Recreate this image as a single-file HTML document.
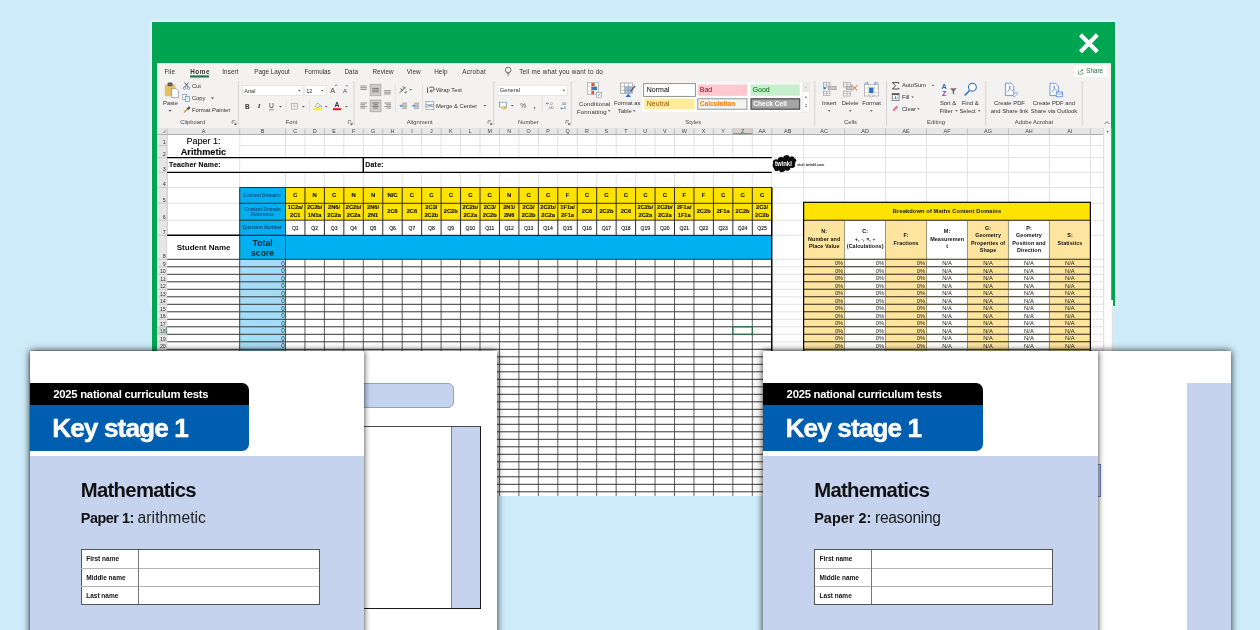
<!DOCTYPE html>
<html lang="en"><head><meta charset="utf-8"><title>KS1 Maths SATs 2025 QLA spreadsheet</title>
<style>
html,body{margin:0;padding:0}
body{width:1260px;height:630px;overflow:hidden;background:#cdebf8;font-family:"Liberation Sans", sans-serif}
#stage{position:relative;width:1260px;height:630px;overflow:hidden;background:#cdebf8}
#stage div,#stage svg{position:absolute;box-sizing:border-box}
#stage .t{white-space:nowrap;line-height:1}
#gs{left:0;top:0;width:1260px;height:630px;will-change:transform}
</style></head><body><div id="stage"><div id="gs">
<div style="left:152px;top:22px;width:962.5px;height:284px;box-shadow:0 0 4px 2px rgba(255,255,255,.45);"></div>
<div style="left:152px;top:22px;width:962.5px;height:284px;background:#00a551;"></div>
<div style="left:152px;top:300px;width:5px;height:196px;background:#00a551;"></div>
<div style="left:157px;top:300px;width:955.8px;height:196px;background:#fff;"></div>
<div style="left:157px;top:63.2px;width:954px;height:432.8px;background:#fff;"></div>
<svg width="1260" height="496" viewBox="0 0 1260 496" style="left:0;top:0" fill="none"><rect x="157" y="127.6" width="946.7" height="6.9" fill="#e6e6e6"/><rect x="157" y="134.5" width="10.2" height="361.5" fill="#e6e6e6"/><rect x="732.85" y="127.6" width="19.45" height="6.9" fill="#d2d2d2"/><path d="M732.85 134.1L752.3 134.1" stroke="#217346" stroke-width="1.2"/><rect x="157" y="326.8" width="10.2" height="7.5" fill="#d2d2d2"/><path d="M166.8 326.8L166.8 334.3" stroke="#217346" stroke-width="1.2"/><path d="M239.7 128.6L239.7 134.5" stroke="#b5b5b5" stroke-width="0.8"/><path d="M239.7 134.5L239.7 496" stroke="#e0e0e0" stroke-width="0.9"/><path d="M285.5 128.6L285.5 134.5" stroke="#b5b5b5" stroke-width="0.8"/><path d="M285.5 134.5L285.5 496" stroke="#e0e0e0" stroke-width="0.9"/><path d="M304.95 128.6L304.95 134.5" stroke="#b5b5b5" stroke-width="0.8"/><path d="M304.95 134.5L304.95 496" stroke="#e0e0e0" stroke-width="0.9"/><path d="M324.4 128.6L324.4 134.5" stroke="#b5b5b5" stroke-width="0.8"/><path d="M324.4 134.5L324.4 496" stroke="#e0e0e0" stroke-width="0.9"/><path d="M343.85 128.6L343.85 134.5" stroke="#b5b5b5" stroke-width="0.8"/><path d="M343.85 134.5L343.85 496" stroke="#e0e0e0" stroke-width="0.9"/><path d="M363.3 128.6L363.3 134.5" stroke="#b5b5b5" stroke-width="0.8"/><path d="M363.3 134.5L363.3 496" stroke="#e0e0e0" stroke-width="0.9"/><path d="M382.75 128.6L382.75 134.5" stroke="#b5b5b5" stroke-width="0.8"/><path d="M382.75 134.5L382.75 496" stroke="#e0e0e0" stroke-width="0.9"/><path d="M402.2 128.6L402.2 134.5" stroke="#b5b5b5" stroke-width="0.8"/><path d="M402.2 134.5L402.2 496" stroke="#e0e0e0" stroke-width="0.9"/><path d="M421.65 128.6L421.65 134.5" stroke="#b5b5b5" stroke-width="0.8"/><path d="M421.65 134.5L421.65 496" stroke="#e0e0e0" stroke-width="0.9"/><path d="M441.1 128.6L441.1 134.5" stroke="#b5b5b5" stroke-width="0.8"/><path d="M441.1 134.5L441.1 496" stroke="#e0e0e0" stroke-width="0.9"/><path d="M460.55 128.6L460.55 134.5" stroke="#b5b5b5" stroke-width="0.8"/><path d="M460.55 134.5L460.55 496" stroke="#e0e0e0" stroke-width="0.9"/><path d="M480 128.6L480 134.5" stroke="#b5b5b5" stroke-width="0.8"/><path d="M480 134.5L480 496" stroke="#e0e0e0" stroke-width="0.9"/><path d="M499.45 128.6L499.45 134.5" stroke="#b5b5b5" stroke-width="0.8"/><path d="M499.45 134.5L499.45 496" stroke="#e0e0e0" stroke-width="0.9"/><path d="M518.9 128.6L518.9 134.5" stroke="#b5b5b5" stroke-width="0.8"/><path d="M518.9 134.5L518.9 496" stroke="#e0e0e0" stroke-width="0.9"/><path d="M538.35 128.6L538.35 134.5" stroke="#b5b5b5" stroke-width="0.8"/><path d="M538.35 134.5L538.35 496" stroke="#e0e0e0" stroke-width="0.9"/><path d="M557.8 128.6L557.8 134.5" stroke="#b5b5b5" stroke-width="0.8"/><path d="M557.8 134.5L557.8 496" stroke="#e0e0e0" stroke-width="0.9"/><path d="M577.25 128.6L577.25 134.5" stroke="#b5b5b5" stroke-width="0.8"/><path d="M577.25 134.5L577.25 496" stroke="#e0e0e0" stroke-width="0.9"/><path d="M596.7 128.6L596.7 134.5" stroke="#b5b5b5" stroke-width="0.8"/><path d="M596.7 134.5L596.7 496" stroke="#e0e0e0" stroke-width="0.9"/><path d="M616.15 128.6L616.15 134.5" stroke="#b5b5b5" stroke-width="0.8"/><path d="M616.15 134.5L616.15 496" stroke="#e0e0e0" stroke-width="0.9"/><path d="M635.6 128.6L635.6 134.5" stroke="#b5b5b5" stroke-width="0.8"/><path d="M635.6 134.5L635.6 496" stroke="#e0e0e0" stroke-width="0.9"/><path d="M655.05 128.6L655.05 134.5" stroke="#b5b5b5" stroke-width="0.8"/><path d="M655.05 134.5L655.05 496" stroke="#e0e0e0" stroke-width="0.9"/><path d="M674.5 128.6L674.5 134.5" stroke="#b5b5b5" stroke-width="0.8"/><path d="M674.5 134.5L674.5 496" stroke="#e0e0e0" stroke-width="0.9"/><path d="M693.95 128.6L693.95 134.5" stroke="#b5b5b5" stroke-width="0.8"/><path d="M693.95 134.5L693.95 496" stroke="#e0e0e0" stroke-width="0.9"/><path d="M713.4 128.6L713.4 134.5" stroke="#b5b5b5" stroke-width="0.8"/><path d="M713.4 134.5L713.4 496" stroke="#e0e0e0" stroke-width="0.9"/><path d="M732.85 128.6L732.85 134.5" stroke="#b5b5b5" stroke-width="0.8"/><path d="M732.85 134.5L732.85 496" stroke="#e0e0e0" stroke-width="0.9"/><path d="M752.3 128.6L752.3 134.5" stroke="#b5b5b5" stroke-width="0.8"/><path d="M752.3 134.5L752.3 496" stroke="#e0e0e0" stroke-width="0.9"/><path d="M771.75 128.6L771.75 134.5" stroke="#b5b5b5" stroke-width="0.8"/><path d="M771.75 134.5L771.75 496" stroke="#e0e0e0" stroke-width="0.9"/><path d="M803.6 128.6L803.6 134.5" stroke="#b5b5b5" stroke-width="0.8"/><path d="M803.6 134.5L803.6 496" stroke="#e0e0e0" stroke-width="0.9"/><path d="M844.57 128.6L844.57 134.5" stroke="#b5b5b5" stroke-width="0.8"/><path d="M844.57 134.5L844.57 496" stroke="#e0e0e0" stroke-width="0.9"/><path d="M885.54 128.6L885.54 134.5" stroke="#b5b5b5" stroke-width="0.8"/><path d="M885.54 134.5L885.54 496" stroke="#e0e0e0" stroke-width="0.9"/><path d="M926.51 128.6L926.51 134.5" stroke="#b5b5b5" stroke-width="0.8"/><path d="M926.51 134.5L926.51 496" stroke="#e0e0e0" stroke-width="0.9"/><path d="M967.48 128.6L967.48 134.5" stroke="#b5b5b5" stroke-width="0.8"/><path d="M967.48 134.5L967.48 496" stroke="#e0e0e0" stroke-width="0.9"/><path d="M1008.45 128.6L1008.45 134.5" stroke="#b5b5b5" stroke-width="0.8"/><path d="M1008.45 134.5L1008.45 496" stroke="#e0e0e0" stroke-width="0.9"/><path d="M1049.42 128.6L1049.42 134.5" stroke="#b5b5b5" stroke-width="0.8"/><path d="M1049.42 134.5L1049.42 496" stroke="#e0e0e0" stroke-width="0.9"/><path d="M1090.39 128.6L1090.39 134.5" stroke="#b5b5b5" stroke-width="0.8"/><path d="M1090.39 134.5L1090.39 496" stroke="#e0e0e0" stroke-width="0.9"/><path d="M167.2 128.6L167.2 496" stroke="#b5b5b5" stroke-width="0.8"/><path d="M167.2 145.6L1103.7 145.6" stroke="#e0e0e0" stroke-width="0.9"/><path d="M157 145.6L167.2 145.6" stroke="#bdbdbd" stroke-width="0.7"/><path d="M167.2 157.6L1103.7 157.6" stroke="#e0e0e0" stroke-width="0.9"/><path d="M157 157.6L167.2 157.6" stroke="#bdbdbd" stroke-width="0.7"/><path d="M167.2 172.3L1103.7 172.3" stroke="#e0e0e0" stroke-width="0.9"/><path d="M157 172.3L167.2 172.3" stroke="#bdbdbd" stroke-width="0.7"/><path d="M167.2 187.5L1103.7 187.5" stroke="#e0e0e0" stroke-width="0.9"/><path d="M157 187.5L167.2 187.5" stroke="#bdbdbd" stroke-width="0.7"/><path d="M167.2 203.3L1103.7 203.3" stroke="#e0e0e0" stroke-width="0.9"/><path d="M157 203.3L167.2 203.3" stroke="#bdbdbd" stroke-width="0.7"/><path d="M167.2 220.2L1103.7 220.2" stroke="#e0e0e0" stroke-width="0.9"/><path d="M157 220.2L167.2 220.2" stroke="#bdbdbd" stroke-width="0.7"/><path d="M167.2 235.3L1103.7 235.3" stroke="#e0e0e0" stroke-width="0.9"/><path d="M157 235.3L167.2 235.3" stroke="#bdbdbd" stroke-width="0.7"/><path d="M167.2 259.3L1103.7 259.3" stroke="#e0e0e0" stroke-width="0.9"/><path d="M157 259.3L167.2 259.3" stroke="#bdbdbd" stroke-width="0.7"/><path d="M167.2 266.8L1103.7 266.8" stroke="#e0e0e0" stroke-width="0.9"/><path d="M157 266.8L167.2 266.8" stroke="#bdbdbd" stroke-width="0.7"/><path d="M167.2 274.3L1103.7 274.3" stroke="#e0e0e0" stroke-width="0.9"/><path d="M157 274.3L167.2 274.3" stroke="#bdbdbd" stroke-width="0.7"/><path d="M167.2 281.8L1103.7 281.8" stroke="#e0e0e0" stroke-width="0.9"/><path d="M157 281.8L167.2 281.8" stroke="#bdbdbd" stroke-width="0.7"/><path d="M167.2 289.3L1103.7 289.3" stroke="#e0e0e0" stroke-width="0.9"/><path d="M157 289.3L167.2 289.3" stroke="#bdbdbd" stroke-width="0.7"/><path d="M167.2 296.8L1103.7 296.8" stroke="#e0e0e0" stroke-width="0.9"/><path d="M157 296.8L167.2 296.8" stroke="#bdbdbd" stroke-width="0.7"/><path d="M167.2 304.3L1103.7 304.3" stroke="#e0e0e0" stroke-width="0.9"/><path d="M157 304.3L167.2 304.3" stroke="#bdbdbd" stroke-width="0.7"/><path d="M167.2 311.8L1103.7 311.8" stroke="#e0e0e0" stroke-width="0.9"/><path d="M157 311.8L167.2 311.8" stroke="#bdbdbd" stroke-width="0.7"/><path d="M167.2 319.3L1103.7 319.3" stroke="#e0e0e0" stroke-width="0.9"/><path d="M157 319.3L167.2 319.3" stroke="#bdbdbd" stroke-width="0.7"/><path d="M167.2 326.8L1103.7 326.8" stroke="#e0e0e0" stroke-width="0.9"/><path d="M157 326.8L167.2 326.8" stroke="#bdbdbd" stroke-width="0.7"/><path d="M167.2 334.3L1103.7 334.3" stroke="#e0e0e0" stroke-width="0.9"/><path d="M157 334.3L167.2 334.3" stroke="#bdbdbd" stroke-width="0.7"/><path d="M167.2 341.8L1103.7 341.8" stroke="#e0e0e0" stroke-width="0.9"/><path d="M157 341.8L167.2 341.8" stroke="#bdbdbd" stroke-width="0.7"/><path d="M167.2 349.3L1103.7 349.3" stroke="#e0e0e0" stroke-width="0.9"/><path d="M157 349.3L167.2 349.3" stroke="#bdbdbd" stroke-width="0.7"/><path d="M167.2 356.8L1103.7 356.8" stroke="#e0e0e0" stroke-width="0.9"/><path d="M157 356.8L167.2 356.8" stroke="#bdbdbd" stroke-width="0.7"/><path d="M167.2 364.3L1103.7 364.3" stroke="#e0e0e0" stroke-width="0.9"/><path d="M157 364.3L167.2 364.3" stroke="#bdbdbd" stroke-width="0.7"/><path d="M167.2 371.8L1103.7 371.8" stroke="#e0e0e0" stroke-width="0.9"/><path d="M157 371.8L167.2 371.8" stroke="#bdbdbd" stroke-width="0.7"/><path d="M167.2 379.3L1103.7 379.3" stroke="#e0e0e0" stroke-width="0.9"/><path d="M157 379.3L167.2 379.3" stroke="#bdbdbd" stroke-width="0.7"/><path d="M167.2 386.8L1103.7 386.8" stroke="#e0e0e0" stroke-width="0.9"/><path d="M157 386.8L167.2 386.8" stroke="#bdbdbd" stroke-width="0.7"/><path d="M167.2 394.3L1103.7 394.3" stroke="#e0e0e0" stroke-width="0.9"/><path d="M157 394.3L167.2 394.3" stroke="#bdbdbd" stroke-width="0.7"/><path d="M167.2 401.8L1103.7 401.8" stroke="#e0e0e0" stroke-width="0.9"/><path d="M157 401.8L167.2 401.8" stroke="#bdbdbd" stroke-width="0.7"/><path d="M167.2 409.3L1103.7 409.3" stroke="#e0e0e0" stroke-width="0.9"/><path d="M157 409.3L167.2 409.3" stroke="#bdbdbd" stroke-width="0.7"/><path d="M167.2 416.8L1103.7 416.8" stroke="#e0e0e0" stroke-width="0.9"/><path d="M157 416.8L167.2 416.8" stroke="#bdbdbd" stroke-width="0.7"/><path d="M167.2 424.3L1103.7 424.3" stroke="#e0e0e0" stroke-width="0.9"/><path d="M157 424.3L167.2 424.3" stroke="#bdbdbd" stroke-width="0.7"/><path d="M167.2 431.8L1103.7 431.8" stroke="#e0e0e0" stroke-width="0.9"/><path d="M157 431.8L167.2 431.8" stroke="#bdbdbd" stroke-width="0.7"/><path d="M167.2 439.3L1103.7 439.3" stroke="#e0e0e0" stroke-width="0.9"/><path d="M157 439.3L167.2 439.3" stroke="#bdbdbd" stroke-width="0.7"/><path d="M167.2 446.8L1103.7 446.8" stroke="#e0e0e0" stroke-width="0.9"/><path d="M157 446.8L167.2 446.8" stroke="#bdbdbd" stroke-width="0.7"/><path d="M167.2 454.3L1103.7 454.3" stroke="#e0e0e0" stroke-width="0.9"/><path d="M157 454.3L167.2 454.3" stroke="#bdbdbd" stroke-width="0.7"/><path d="M167.2 461.8L1103.7 461.8" stroke="#e0e0e0" stroke-width="0.9"/><path d="M157 461.8L167.2 461.8" stroke="#bdbdbd" stroke-width="0.7"/><path d="M167.2 469.3L1103.7 469.3" stroke="#e0e0e0" stroke-width="0.9"/><path d="M157 469.3L167.2 469.3" stroke="#bdbdbd" stroke-width="0.7"/><path d="M167.2 476.8L1103.7 476.8" stroke="#e0e0e0" stroke-width="0.9"/><path d="M157 476.8L167.2 476.8" stroke="#bdbdbd" stroke-width="0.7"/><path d="M167.2 484.3L1103.7 484.3" stroke="#e0e0e0" stroke-width="0.9"/><path d="M157 484.3L167.2 484.3" stroke="#bdbdbd" stroke-width="0.7"/><path d="M167.2 491.8L1103.7 491.8" stroke="#e0e0e0" stroke-width="0.9"/><path d="M157 491.8L167.2 491.8" stroke="#bdbdbd" stroke-width="0.7"/><path d="M157 134.5L1103.7 134.5" stroke="#a8a8a8" stroke-width="0.9"/><path d="M157 127.6L1111 127.6" stroke="#cfcfcf" stroke-width="0.9"/><rect x="167.8" y="135.1" width="71.4" height="21.9" fill="#fff"/><rect x="167.8" y="157.6" width="603.95" height="14.7" fill="#fff"/><path d="M239.7 157.6L239.7 172.3" stroke="#e0e0e0" stroke-width="0.9"/><rect x="239.7" y="187.5" width="45.8" height="47.8" fill="#00b0f0"/><rect x="285.5" y="187.5" width="486.25" height="32.7" fill="#ffe300"/><rect x="285.5" y="220.2" width="486.25" height="15.1" fill="#fff"/><rect x="239.7" y="235.3" width="532.05" height="24" fill="#00b0f0"/><rect x="167.2" y="235.3" width="72.5" height="24" fill="#fff"/><rect x="239.7" y="259.3" width="45.8" height="236.7" fill="#a5ddf8"/><rect x="167.2" y="259.3" width="72.5" height="236.7" fill="#fff"/><rect x="285.5" y="259.3" width="486.25" height="236.7" fill="#fff"/><rect x="803.6" y="202.3" width="286.79" height="17.9" fill="#ffe300"/><rect x="803.6" y="220.2" width="40.97" height="275.8" fill="#fee59f"/><rect x="844.57" y="220.2" width="40.97" height="275.8" fill="#fff"/><rect x="885.54" y="220.2" width="40.97" height="275.8" fill="#fee59f"/><rect x="926.51" y="220.2" width="40.97" height="275.8" fill="#fff"/><rect x="967.48" y="220.2" width="40.97" height="275.8" fill="#fee59f"/><rect x="1008.45" y="220.2" width="40.97" height="275.8" fill="#fff"/><rect x="1049.42" y="220.2" width="40.97" height="275.8" fill="#fee59f"/><path d="M239.7 187.5L771.75 187.5" stroke="#303030" stroke-width="1"/><path d="M239.7 203.3L771.75 203.3" stroke="#303030" stroke-width="1"/><path d="M239.7 220.2L771.75 220.2" stroke="#303030" stroke-width="1"/><path d="M285.5 187.5L285.5 235.3" stroke="#303030" stroke-width="1"/><path d="M304.95 187.5L304.95 235.3" stroke="#303030" stroke-width="1"/><path d="M324.4 187.5L324.4 235.3" stroke="#303030" stroke-width="1"/><path d="M343.85 187.5L343.85 235.3" stroke="#303030" stroke-width="1"/><path d="M363.3 187.5L363.3 235.3" stroke="#303030" stroke-width="1"/><path d="M382.75 187.5L382.75 235.3" stroke="#303030" stroke-width="1"/><path d="M402.2 187.5L402.2 235.3" stroke="#303030" stroke-width="1"/><path d="M421.65 187.5L421.65 235.3" stroke="#303030" stroke-width="1"/><path d="M441.1 187.5L441.1 235.3" stroke="#303030" stroke-width="1"/><path d="M460.55 187.5L460.55 235.3" stroke="#303030" stroke-width="1"/><path d="M480 187.5L480 235.3" stroke="#303030" stroke-width="1"/><path d="M499.45 187.5L499.45 235.3" stroke="#303030" stroke-width="1"/><path d="M518.9 187.5L518.9 235.3" stroke="#303030" stroke-width="1"/><path d="M538.35 187.5L538.35 235.3" stroke="#303030" stroke-width="1"/><path d="M557.8 187.5L557.8 235.3" stroke="#303030" stroke-width="1"/><path d="M577.25 187.5L577.25 235.3" stroke="#303030" stroke-width="1"/><path d="M596.7 187.5L596.7 235.3" stroke="#303030" stroke-width="1"/><path d="M616.15 187.5L616.15 235.3" stroke="#303030" stroke-width="1"/><path d="M635.6 187.5L635.6 235.3" stroke="#303030" stroke-width="1"/><path d="M655.05 187.5L655.05 235.3" stroke="#303030" stroke-width="1"/><path d="M674.5 187.5L674.5 235.3" stroke="#303030" stroke-width="1"/><path d="M693.95 187.5L693.95 235.3" stroke="#303030" stroke-width="1"/><path d="M713.4 187.5L713.4 235.3" stroke="#303030" stroke-width="1"/><path d="M732.85 187.5L732.85 235.3" stroke="#303030" stroke-width="1"/><path d="M752.3 187.5L752.3 235.3" stroke="#303030" stroke-width="1"/><path d="M771.75 187.5L771.75 235.3" stroke="#303030" stroke-width="1"/><path d="M239.7 187.5L239.7 259.3" stroke="#303030" stroke-width="1"/><path d="M167.2 157.6L771.75 157.6" stroke="#000" stroke-width="1.3"/><path d="M167.2 172.3L771.75 172.3" stroke="#000" stroke-width="1.3"/><path d="M363.3 157.6L363.3 172.3" stroke="#000" stroke-width="1.4"/><path d="M167.2 235.3L239.7 235.3" stroke="#000" stroke-width="1.5"/><path d="M239.7 235.3L771.75 235.3" stroke="#111" stroke-width="1"/><path d="M285.5 235.3L285.5 259.3" stroke="#0a4a66" stroke-width="1"/><path d="M167.2 259.3L771.75 259.3" stroke="#303030" stroke-width="0.98"/><path d="M167.2 266.8L771.75 266.8" stroke="#303030" stroke-width="0.98"/><path d="M167.2 274.3L771.75 274.3" stroke="#303030" stroke-width="0.98"/><path d="M167.2 281.8L771.75 281.8" stroke="#303030" stroke-width="0.98"/><path d="M167.2 289.3L771.75 289.3" stroke="#303030" stroke-width="0.98"/><path d="M167.2 296.8L771.75 296.8" stroke="#303030" stroke-width="0.98"/><path d="M167.2 304.3L771.75 304.3" stroke="#303030" stroke-width="0.98"/><path d="M167.2 311.8L771.75 311.8" stroke="#303030" stroke-width="0.98"/><path d="M167.2 319.3L771.75 319.3" stroke="#303030" stroke-width="0.98"/><path d="M167.2 326.8L771.75 326.8" stroke="#303030" stroke-width="0.98"/><path d="M167.2 334.3L771.75 334.3" stroke="#303030" stroke-width="0.98"/><path d="M167.2 341.8L771.75 341.8" stroke="#303030" stroke-width="0.98"/><path d="M167.2 349.3L771.75 349.3" stroke="#303030" stroke-width="0.98"/><path d="M167.2 356.8L771.75 356.8" stroke="#303030" stroke-width="0.98"/><path d="M167.2 364.3L771.75 364.3" stroke="#303030" stroke-width="0.98"/><path d="M167.2 371.8L771.75 371.8" stroke="#303030" stroke-width="0.98"/><path d="M167.2 379.3L771.75 379.3" stroke="#303030" stroke-width="0.98"/><path d="M167.2 386.8L771.75 386.8" stroke="#303030" stroke-width="0.98"/><path d="M167.2 394.3L771.75 394.3" stroke="#303030" stroke-width="0.98"/><path d="M167.2 401.8L771.75 401.8" stroke="#303030" stroke-width="0.98"/><path d="M167.2 409.3L771.75 409.3" stroke="#303030" stroke-width="0.98"/><path d="M167.2 416.8L771.75 416.8" stroke="#303030" stroke-width="0.98"/><path d="M167.2 424.3L771.75 424.3" stroke="#303030" stroke-width="0.98"/><path d="M167.2 431.8L771.75 431.8" stroke="#303030" stroke-width="0.98"/><path d="M167.2 439.3L771.75 439.3" stroke="#303030" stroke-width="0.98"/><path d="M167.2 446.8L771.75 446.8" stroke="#303030" stroke-width="0.98"/><path d="M167.2 454.3L771.75 454.3" stroke="#303030" stroke-width="0.98"/><path d="M167.2 461.8L771.75 461.8" stroke="#303030" stroke-width="0.98"/><path d="M167.2 469.3L771.75 469.3" stroke="#303030" stroke-width="0.98"/><path d="M167.2 476.8L771.75 476.8" stroke="#303030" stroke-width="0.98"/><path d="M167.2 484.3L771.75 484.3" stroke="#303030" stroke-width="0.98"/><path d="M167.2 491.8L771.75 491.8" stroke="#303030" stroke-width="0.98"/><path d="M285.5 259.3L285.5 496" stroke="#303030" stroke-width="0.78"/><path d="M304.95 259.3L304.95 496" stroke="#303030" stroke-width="0.78"/><path d="M324.4 259.3L324.4 496" stroke="#303030" stroke-width="0.78"/><path d="M343.85 259.3L343.85 496" stroke="#303030" stroke-width="0.78"/><path d="M363.3 259.3L363.3 496" stroke="#303030" stroke-width="0.78"/><path d="M382.75 259.3L382.75 496" stroke="#303030" stroke-width="0.78"/><path d="M402.2 259.3L402.2 496" stroke="#303030" stroke-width="0.78"/><path d="M421.65 259.3L421.65 496" stroke="#303030" stroke-width="0.78"/><path d="M441.1 259.3L441.1 496" stroke="#303030" stroke-width="0.78"/><path d="M460.55 259.3L460.55 496" stroke="#303030" stroke-width="0.78"/><path d="M480 259.3L480 496" stroke="#303030" stroke-width="0.78"/><path d="M499.45 259.3L499.45 496" stroke="#303030" stroke-width="0.78"/><path d="M518.9 259.3L518.9 496" stroke="#303030" stroke-width="0.78"/><path d="M538.35 259.3L538.35 496" stroke="#303030" stroke-width="0.78"/><path d="M557.8 259.3L557.8 496" stroke="#303030" stroke-width="0.78"/><path d="M577.25 259.3L577.25 496" stroke="#303030" stroke-width="0.78"/><path d="M596.7 259.3L596.7 496" stroke="#303030" stroke-width="0.78"/><path d="M616.15 259.3L616.15 496" stroke="#303030" stroke-width="0.78"/><path d="M635.6 259.3L635.6 496" stroke="#303030" stroke-width="0.78"/><path d="M655.05 259.3L655.05 496" stroke="#303030" stroke-width="0.78"/><path d="M674.5 259.3L674.5 496" stroke="#303030" stroke-width="0.78"/><path d="M693.95 259.3L693.95 496" stroke="#303030" stroke-width="0.78"/><path d="M713.4 259.3L713.4 496" stroke="#303030" stroke-width="0.78"/><path d="M732.85 259.3L732.85 496" stroke="#303030" stroke-width="0.78"/><path d="M752.3 259.3L752.3 496" stroke="#303030" stroke-width="0.78"/><path d="M771.75 259.3L771.75 496" stroke="#303030" stroke-width="0.78"/><path d="M239.7 259.3L239.7 496" stroke="#303030" stroke-width="0.9"/><path d="M771.75 187.5L771.75 496" stroke="#000" stroke-width="1.3"/><path d="M803.6 259.3L1090.39 259.3" stroke="#2a2410" stroke-width="1.1"/><path d="M803.6 266.8L1090.39 266.8" stroke="#2a2410" stroke-width="1.1"/><path d="M803.6 274.3L1090.39 274.3" stroke="#2a2410" stroke-width="1.1"/><path d="M803.6 281.8L1090.39 281.8" stroke="#2a2410" stroke-width="1.1"/><path d="M803.6 289.3L1090.39 289.3" stroke="#2a2410" stroke-width="1.1"/><path d="M803.6 296.8L1090.39 296.8" stroke="#2a2410" stroke-width="1.1"/><path d="M803.6 304.3L1090.39 304.3" stroke="#2a2410" stroke-width="1.1"/><path d="M803.6 311.8L1090.39 311.8" stroke="#2a2410" stroke-width="1.1"/><path d="M803.6 319.3L1090.39 319.3" stroke="#2a2410" stroke-width="1.1"/><path d="M803.6 326.8L1090.39 326.8" stroke="#2a2410" stroke-width="1.1"/><path d="M803.6 334.3L1090.39 334.3" stroke="#2a2410" stroke-width="1.1"/><path d="M803.6 341.8L1090.39 341.8" stroke="#2a2410" stroke-width="1.1"/><path d="M803.6 349.3L1090.39 349.3" stroke="#2a2410" stroke-width="1.1"/><path d="M803.6 356.8L1090.39 356.8" stroke="#2a2410" stroke-width="1.1"/><path d="M803.6 364.3L1090.39 364.3" stroke="#2a2410" stroke-width="1.1"/><path d="M803.6 371.8L1090.39 371.8" stroke="#2a2410" stroke-width="1.1"/><path d="M803.6 379.3L1090.39 379.3" stroke="#2a2410" stroke-width="1.1"/><path d="M803.6 386.8L1090.39 386.8" stroke="#2a2410" stroke-width="1.1"/><path d="M803.6 394.3L1090.39 394.3" stroke="#2a2410" stroke-width="1.1"/><path d="M803.6 401.8L1090.39 401.8" stroke="#2a2410" stroke-width="1.1"/><path d="M803.6 409.3L1090.39 409.3" stroke="#2a2410" stroke-width="1.1"/><path d="M803.6 416.8L1090.39 416.8" stroke="#2a2410" stroke-width="1.1"/><path d="M803.6 424.3L1090.39 424.3" stroke="#2a2410" stroke-width="1.1"/><path d="M803.6 431.8L1090.39 431.8" stroke="#2a2410" stroke-width="1.1"/><path d="M803.6 439.3L1090.39 439.3" stroke="#2a2410" stroke-width="1.1"/><path d="M803.6 446.8L1090.39 446.8" stroke="#2a2410" stroke-width="1.1"/><path d="M803.6 454.3L1090.39 454.3" stroke="#2a2410" stroke-width="1.1"/><path d="M803.6 461.8L1090.39 461.8" stroke="#2a2410" stroke-width="1.1"/><path d="M803.6 469.3L1090.39 469.3" stroke="#2a2410" stroke-width="1.1"/><path d="M803.6 476.8L1090.39 476.8" stroke="#2a2410" stroke-width="1.1"/><path d="M803.6 484.3L1090.39 484.3" stroke="#2a2410" stroke-width="1.1"/><path d="M803.6 491.8L1090.39 491.8" stroke="#2a2410" stroke-width="1.1"/><path d="M803.6 220.2L1090.39 220.2" stroke="#1f1c0c" stroke-width="1.1"/><path d="M844.57 220.2L844.57 496" stroke="#5e5838" stroke-width="0.6"/><path d="M885.54 220.2L885.54 496" stroke="#5e5838" stroke-width="0.6"/><path d="M926.51 220.2L926.51 496" stroke="#5e5838" stroke-width="0.6"/><path d="M967.48 220.2L967.48 496" stroke="#5e5838" stroke-width="0.6"/><path d="M1008.45 220.2L1008.45 496" stroke="#5e5838" stroke-width="0.6"/><path d="M1049.42 220.2L1049.42 496" stroke="#5e5838" stroke-width="0.6"/><rect x="803.6" y="202.3" width="286.79" height="297.7" fill="none" stroke="#000" stroke-width="1.2"/><rect x="732.85" y="326.8" width="19.45" height="7.5" fill="none" stroke="#217346" stroke-width="1.1"/><rect x="751.3" y="333.3" width="2" height="2" fill="#217346"/><path d="M165.5 129.5V133H162Z" fill="#b0b0b0"/><g fill="#0d0d0d" transform="rotate(-10 784 163.8)"><ellipse cx="784" cy="163.9" rx="11.6" ry="5.6"/><circle cx="776.6" cy="161.2" r="3.3"/><circle cx="781.6" cy="159.6" r="3.2"/><circle cx="787.4" cy="159.0" r="3.4"/><circle cx="792.4" cy="160.8" r="3.0"/><circle cx="776.4" cy="166.6" r="3.2"/><circle cx="781.2" cy="168.4" r="3.3"/><circle cx="786.6" cy="168.2" r="3.0"/><circle cx="791.8" cy="166.4" r="3.0"/></g><circle cx="794.3" cy="160.3" r="1.9" fill="#0d0d0d"/><rect x="1103.7" y="127.6" width="7.5" height="368.4" fill="#fff"/><path d="M1103.7 127.6L1103.7 496" stroke="#cfcfcf" stroke-width="0.8"/><path d="M1112.3 306L1112.3 496" stroke="#d0d0d0" stroke-width="0.8"/><rect x="1104.1" y="128.1" width="6.9" height="7.4" fill="#f4f4f4"/><circle cx="1107.6" cy="131.6" r="0.9" fill="#666"/></svg>
<div class="t" style="top:128.63px;font-size:5.4px;color:#444;left:203.45px;transform:translateX(-50%);">A</div>
<div class="t" style="top:128.63px;font-size:5.4px;color:#444;left:262.6px;transform:translateX(-50%);">B</div>
<div class="t" style="top:128.63px;font-size:5.4px;color:#444;left:295.23px;transform:translateX(-50%);">C</div>
<div class="t" style="top:128.63px;font-size:5.4px;color:#444;left:314.67px;transform:translateX(-50%);">D</div>
<div class="t" style="top:128.63px;font-size:5.4px;color:#444;left:334.12px;transform:translateX(-50%);">E</div>
<div class="t" style="top:128.63px;font-size:5.4px;color:#444;left:353.58px;transform:translateX(-50%);">F</div>
<div class="t" style="top:128.63px;font-size:5.4px;color:#444;left:373.02px;transform:translateX(-50%);">G</div>
<div class="t" style="top:128.63px;font-size:5.4px;color:#444;left:392.48px;transform:translateX(-50%);">H</div>
<div class="t" style="top:128.63px;font-size:5.4px;color:#444;left:411.92px;transform:translateX(-50%);">I</div>
<div class="t" style="top:128.63px;font-size:5.4px;color:#444;left:431.38px;transform:translateX(-50%);">J</div>
<div class="t" style="top:128.63px;font-size:5.4px;color:#444;left:450.82px;transform:translateX(-50%);">K</div>
<div class="t" style="top:128.63px;font-size:5.4px;color:#444;left:470.27px;transform:translateX(-50%);">L</div>
<div class="t" style="top:128.63px;font-size:5.4px;color:#444;left:489.73px;transform:translateX(-50%);">M</div>
<div class="t" style="top:128.63px;font-size:5.4px;color:#444;left:509.17px;transform:translateX(-50%);">N</div>
<div class="t" style="top:128.63px;font-size:5.4px;color:#444;left:528.62px;transform:translateX(-50%);">O</div>
<div class="t" style="top:128.63px;font-size:5.4px;color:#444;left:548.08px;transform:translateX(-50%);">P</div>
<div class="t" style="top:128.63px;font-size:5.4px;color:#444;left:567.52px;transform:translateX(-50%);">Q</div>
<div class="t" style="top:128.63px;font-size:5.4px;color:#444;left:586.98px;transform:translateX(-50%);">R</div>
<div class="t" style="top:128.63px;font-size:5.4px;color:#444;left:606.42px;transform:translateX(-50%);">S</div>
<div class="t" style="top:128.63px;font-size:5.4px;color:#444;left:625.88px;transform:translateX(-50%);">T</div>
<div class="t" style="top:128.63px;font-size:5.4px;color:#444;left:645.32px;transform:translateX(-50%);">U</div>
<div class="t" style="top:128.63px;font-size:5.4px;color:#444;left:664.77px;transform:translateX(-50%);">V</div>
<div class="t" style="top:128.63px;font-size:5.4px;color:#444;left:684.23px;transform:translateX(-50%);">W</div>
<div class="t" style="top:128.63px;font-size:5.4px;color:#444;left:703.67px;transform:translateX(-50%);">X</div>
<div class="t" style="top:128.63px;font-size:5.4px;color:#444;left:723.12px;transform:translateX(-50%);">Y</div>
<div class="t" style="top:128.63px;font-size:5.4px;color:#217346;left:742.57px;transform:translateX(-50%);">Z</div>
<div class="t" style="top:128.63px;font-size:5.4px;color:#444;left:762.02px;transform:translateX(-50%);">AA</div>
<div class="t" style="top:128.63px;font-size:5.4px;color:#444;left:787.67px;transform:translateX(-50%);">AB</div>
<div class="t" style="top:128.63px;font-size:5.4px;color:#444;left:824.09px;transform:translateX(-50%);">AC</div>
<div class="t" style="top:128.63px;font-size:5.4px;color:#444;left:865.06px;transform:translateX(-50%);">AD</div>
<div class="t" style="top:128.63px;font-size:5.4px;color:#444;left:906.02px;transform:translateX(-50%);">AE</div>
<div class="t" style="top:128.63px;font-size:5.4px;color:#444;left:947px;transform:translateX(-50%);">AF</div>
<div class="t" style="top:128.63px;font-size:5.4px;color:#444;left:987.97px;transform:translateX(-50%);">AG</div>
<div class="t" style="top:128.63px;font-size:5.4px;color:#444;left:1028.93px;transform:translateX(-50%);">AH</div>
<div class="t" style="top:128.63px;font-size:5.4px;color:#444;left:1069.9px;transform:translateX(-50%);">AI</div>
<div class="t" style="top:140.41px;font-size:5.3px;color:#303030;left:165.8px;transform:translateX(-100%);">1</div>
<div class="t" style="top:152.41px;font-size:5.3px;color:#303030;left:165.8px;transform:translateX(-100%);">2</div>
<div class="t" style="top:167.11px;font-size:5.3px;color:#303030;left:165.8px;transform:translateX(-100%);">3</div>
<div class="t" style="top:182.31px;font-size:5.3px;color:#303030;left:165.8px;transform:translateX(-100%);">4</div>
<div class="t" style="top:198.11px;font-size:5.3px;color:#303030;left:165.8px;transform:translateX(-100%);">5</div>
<div class="t" style="top:215.01px;font-size:5.3px;color:#303030;left:165.8px;transform:translateX(-100%);">6</div>
<div class="t" style="top:230.11px;font-size:5.3px;color:#303030;left:165.8px;transform:translateX(-100%);">7</div>
<div class="t" style="top:254.11px;font-size:5.3px;color:#303030;left:165.8px;transform:translateX(-100%);">8</div>
<div class="t" style="top:261.61px;font-size:5.3px;color:#303030;left:165.8px;transform:translateX(-100%);">9</div>
<div class="t" style="top:269.11px;font-size:5.3px;color:#303030;left:165.8px;transform:translateX(-100%);">10</div>
<div class="t" style="top:276.61px;font-size:5.3px;color:#303030;left:165.8px;transform:translateX(-100%);">11</div>
<div class="t" style="top:284.11px;font-size:5.3px;color:#303030;left:165.8px;transform:translateX(-100%);">12</div>
<div class="t" style="top:291.61px;font-size:5.3px;color:#303030;left:165.8px;transform:translateX(-100%);">13</div>
<div class="t" style="top:299.11px;font-size:5.3px;color:#303030;left:165.8px;transform:translateX(-100%);">14</div>
<div class="t" style="top:306.61px;font-size:5.3px;color:#303030;left:165.8px;transform:translateX(-100%);">15</div>
<div class="t" style="top:314.11px;font-size:5.3px;color:#303030;left:165.8px;transform:translateX(-100%);">16</div>
<div class="t" style="top:321.61px;font-size:5.3px;color:#303030;left:165.8px;transform:translateX(-100%);">17</div>
<div class="t" style="top:329.11px;font-size:5.3px;color:#217346;left:165.8px;transform:translateX(-100%);">18</div>
<div class="t" style="top:336.61px;font-size:5.3px;color:#303030;left:165.8px;transform:translateX(-100%);">19</div>
<div class="t" style="top:344.11px;font-size:5.3px;color:#303030;left:165.8px;transform:translateX(-100%);">20</div>
<div class="t" style="top:351.61px;font-size:5.3px;color:#303030;left:165.8px;transform:translateX(-100%);">21</div>
<div class="t" style="top:359.11px;font-size:5.3px;color:#303030;left:165.8px;transform:translateX(-100%);">22</div>
<div class="t" style="top:366.61px;font-size:5.3px;color:#303030;left:165.8px;transform:translateX(-100%);">23</div>
<div class="t" style="top:374.11px;font-size:5.3px;color:#303030;left:165.8px;transform:translateX(-100%);">24</div>
<div class="t" style="top:381.61px;font-size:5.3px;color:#303030;left:165.8px;transform:translateX(-100%);">25</div>
<div class="t" style="top:389.11px;font-size:5.3px;color:#303030;left:165.8px;transform:translateX(-100%);">26</div>
<div class="t" style="top:396.61px;font-size:5.3px;color:#303030;left:165.8px;transform:translateX(-100%);">27</div>
<div class="t" style="top:404.11px;font-size:5.3px;color:#303030;left:165.8px;transform:translateX(-100%);">28</div>
<div class="t" style="top:411.61px;font-size:5.3px;color:#303030;left:165.8px;transform:translateX(-100%);">29</div>
<div class="t" style="top:419.11px;font-size:5.3px;color:#303030;left:165.8px;transform:translateX(-100%);">30</div>
<div class="t" style="top:426.61px;font-size:5.3px;color:#303030;left:165.8px;transform:translateX(-100%);">31</div>
<div class="t" style="top:434.11px;font-size:5.3px;color:#303030;left:165.8px;transform:translateX(-100%);">32</div>
<div class="t" style="top:441.61px;font-size:5.3px;color:#303030;left:165.8px;transform:translateX(-100%);">33</div>
<div class="t" style="top:449.11px;font-size:5.3px;color:#303030;left:165.8px;transform:translateX(-100%);">34</div>
<div class="t" style="top:456.61px;font-size:5.3px;color:#303030;left:165.8px;transform:translateX(-100%);">35</div>
<div class="t" style="top:464.11px;font-size:5.3px;color:#303030;left:165.8px;transform:translateX(-100%);">36</div>
<div class="t" style="top:471.61px;font-size:5.3px;color:#303030;left:165.8px;transform:translateX(-100%);">37</div>
<div class="t" style="top:479.11px;font-size:5.3px;color:#303030;left:165.8px;transform:translateX(-100%);">38</div>
<div class="t" style="top:486.61px;font-size:5.3px;color:#303030;left:165.8px;transform:translateX(-100%);">39</div>
<div class="t" style="top:136.88px;font-size:9px;color:#111;left:203.45px;transform:translateX(-50%);-webkit-text-stroke:0.15px #111;">Paper 1:</div>
<div class="t" style="top:147.81px;font-size:9.2px;color:#111;font-weight:700;left:203.45px;transform:translateX(-50%);-webkit-text-stroke:0.15px #111;">Arithmetic</div>
<div class="t" style="top:162.46px;font-size:6.9px;color:#111;font-weight:700;letter-spacing:0.22px;left:169px;-webkit-text-stroke:0.15px #111;">Teacher Name:</div>
<div class="t" style="top:162.46px;font-size:6.9px;color:#111;font-weight:700;letter-spacing:0.25px;left:365.3px;-webkit-text-stroke:0.15px #111;">Date:</div>
<div class="t" style="top:244.03px;font-size:8px;color:#111;font-weight:700;left:203.65px;transform:translateX(-50%);">Student Name</div>
<div class="t" style="top:238.64px;font-size:8.7px;color:#12202c;font-weight:700;left:262.6px;transform:translateX(-50%);">Total</div>
<div class="t" style="top:249.44px;font-size:8.7px;color:#12202c;font-weight:700;left:262.6px;transform:translateX(-50%);">score</div>
<div class="t" style="top:194.02px;font-size:4.7px;color:#0b4f7a;font-weight:700;left:262.2px;transform:translateX(-50%);">Content Domain:</div>
<div class="t" style="top:207.52px;font-size:4.7px;color:#0b4f7a;font-weight:700;left:262.6px;transform:translateX(-50%);">Content  Domain</div>
<div class="t" style="top:213.12px;font-size:4.7px;color:#0b4f7a;font-weight:700;left:262.2px;transform:translateX(-50%);">Reference</div>
<div class="t" style="top:226.32px;font-size:4.7px;color:#0b4f7a;font-weight:700;left:262.2px;transform:translateX(-50%);">Question Number</div>
<div class="t" style="top:192.61px;font-size:5.9px;color:#111;font-weight:700;left:295.23px;transform:translateX(-50%);-webkit-text-stroke:0.12px #111;">C</div>
<div class="t" style="top:205.27px;font-size:5.7px;color:#111;font-weight:700;left:295.23px;transform:translateX(-50%);-webkit-text-stroke:0.12px #111;">1C2a/</div>
<div class="t" style="top:212.67px;font-size:5.7px;color:#111;font-weight:700;left:295.23px;transform:translateX(-50%);-webkit-text-stroke:0.12px #111;">2C1</div>
<div class="t" style="top:226.47px;font-size:5px;color:#111;left:295.23px;transform:translateX(-50%);-webkit-text-stroke:0.12px #111;">Q1</div>
<div class="t" style="top:192.61px;font-size:5.9px;color:#111;font-weight:700;left:314.68px;transform:translateX(-50%);-webkit-text-stroke:0.12px #111;">N</div>
<div class="t" style="top:205.27px;font-size:5.7px;color:#111;font-weight:700;left:314.68px;transform:translateX(-50%);-webkit-text-stroke:0.12px #111;">2C2b/</div>
<div class="t" style="top:212.67px;font-size:5.7px;color:#111;font-weight:700;left:314.68px;transform:translateX(-50%);-webkit-text-stroke:0.12px #111;">1N1a</div>
<div class="t" style="top:226.47px;font-size:5px;color:#111;left:314.68px;transform:translateX(-50%);-webkit-text-stroke:0.12px #111;">Q2</div>
<div class="t" style="top:192.61px;font-size:5.9px;color:#111;font-weight:700;left:334.12px;transform:translateX(-50%);-webkit-text-stroke:0.12px #111;">C</div>
<div class="t" style="top:205.27px;font-size:5.7px;color:#111;font-weight:700;left:334.12px;transform:translateX(-50%);-webkit-text-stroke:0.12px #111;">2N6/</div>
<div class="t" style="top:212.67px;font-size:5.7px;color:#111;font-weight:700;left:334.12px;transform:translateX(-50%);-webkit-text-stroke:0.12px #111;">2C2a</div>
<div class="t" style="top:226.47px;font-size:5px;color:#111;left:334.12px;transform:translateX(-50%);-webkit-text-stroke:0.12px #111;">Q3</div>
<div class="t" style="top:192.61px;font-size:5.9px;color:#111;font-weight:700;left:353.57px;transform:translateX(-50%);-webkit-text-stroke:0.12px #111;">N</div>
<div class="t" style="top:205.27px;font-size:5.7px;color:#111;font-weight:700;left:353.57px;transform:translateX(-50%);-webkit-text-stroke:0.12px #111;">2C2b/</div>
<div class="t" style="top:212.67px;font-size:5.7px;color:#111;font-weight:700;left:353.57px;transform:translateX(-50%);-webkit-text-stroke:0.12px #111;">2C2a</div>
<div class="t" style="top:226.47px;font-size:5px;color:#111;left:353.57px;transform:translateX(-50%);-webkit-text-stroke:0.12px #111;">Q4</div>
<div class="t" style="top:192.61px;font-size:5.9px;color:#111;font-weight:700;left:373.02px;transform:translateX(-50%);-webkit-text-stroke:0.12px #111;">N</div>
<div class="t" style="top:205.27px;font-size:5.7px;color:#111;font-weight:700;left:373.02px;transform:translateX(-50%);-webkit-text-stroke:0.12px #111;">2N6/</div>
<div class="t" style="top:212.67px;font-size:5.7px;color:#111;font-weight:700;left:373.02px;transform:translateX(-50%);-webkit-text-stroke:0.12px #111;">2N1</div>
<div class="t" style="top:226.47px;font-size:5px;color:#111;left:373.02px;transform:translateX(-50%);-webkit-text-stroke:0.12px #111;">Q5</div>
<div class="t" style="top:192.61px;font-size:5.9px;color:#111;font-weight:700;left:392.48px;transform:translateX(-50%);-webkit-text-stroke:0.12px #111;">N/C</div>
<div class="t" style="top:209.07px;font-size:5.7px;color:#111;font-weight:700;left:392.48px;transform:translateX(-50%);-webkit-text-stroke:0.12px #111;">2C6</div>
<div class="t" style="top:226.47px;font-size:5px;color:#111;left:392.48px;transform:translateX(-50%);-webkit-text-stroke:0.12px #111;">Q6</div>
<div class="t" style="top:192.61px;font-size:5.9px;color:#111;font-weight:700;left:411.93px;transform:translateX(-50%);-webkit-text-stroke:0.12px #111;">C</div>
<div class="t" style="top:209.07px;font-size:5.7px;color:#111;font-weight:700;left:411.93px;transform:translateX(-50%);-webkit-text-stroke:0.12px #111;">2C6</div>
<div class="t" style="top:226.47px;font-size:5px;color:#111;left:411.93px;transform:translateX(-50%);-webkit-text-stroke:0.12px #111;">Q7</div>
<div class="t" style="top:192.61px;font-size:5.9px;color:#111;font-weight:700;left:431.38px;transform:translateX(-50%);-webkit-text-stroke:0.12px #111;">C</div>
<div class="t" style="top:205.27px;font-size:5.7px;color:#111;font-weight:700;left:431.38px;transform:translateX(-50%);-webkit-text-stroke:0.12px #111;">2C3/</div>
<div class="t" style="top:212.67px;font-size:5.7px;color:#111;font-weight:700;left:431.38px;transform:translateX(-50%);-webkit-text-stroke:0.12px #111;">2C2b</div>
<div class="t" style="top:226.47px;font-size:5px;color:#111;left:431.38px;transform:translateX(-50%);-webkit-text-stroke:0.12px #111;">Q8</div>
<div class="t" style="top:192.61px;font-size:5.9px;color:#111;font-weight:700;left:450.82px;transform:translateX(-50%);-webkit-text-stroke:0.12px #111;">C</div>
<div class="t" style="top:209.07px;font-size:5.7px;color:#111;font-weight:700;left:450.82px;transform:translateX(-50%);-webkit-text-stroke:0.12px #111;">2C2b</div>
<div class="t" style="top:226.47px;font-size:5px;color:#111;left:450.82px;transform:translateX(-50%);-webkit-text-stroke:0.12px #111;">Q9</div>
<div class="t" style="top:192.61px;font-size:5.9px;color:#111;font-weight:700;left:470.27px;transform:translateX(-50%);-webkit-text-stroke:0.12px #111;">C</div>
<div class="t" style="top:205.27px;font-size:5.7px;color:#111;font-weight:700;left:470.27px;transform:translateX(-50%);-webkit-text-stroke:0.12px #111;">2C2b/</div>
<div class="t" style="top:212.67px;font-size:5.7px;color:#111;font-weight:700;left:470.27px;transform:translateX(-50%);-webkit-text-stroke:0.12px #111;">2C2a</div>
<div class="t" style="top:226.47px;font-size:5px;color:#111;left:470.27px;transform:translateX(-50%);-webkit-text-stroke:0.12px #111;">Q10</div>
<div class="t" style="top:192.61px;font-size:5.9px;color:#111;font-weight:700;left:489.73px;transform:translateX(-50%);-webkit-text-stroke:0.12px #111;">C</div>
<div class="t" style="top:205.27px;font-size:5.7px;color:#111;font-weight:700;left:489.73px;transform:translateX(-50%);-webkit-text-stroke:0.12px #111;">2C3/</div>
<div class="t" style="top:212.67px;font-size:5.7px;color:#111;font-weight:700;left:489.73px;transform:translateX(-50%);-webkit-text-stroke:0.12px #111;">2C2b</div>
<div class="t" style="top:226.47px;font-size:5px;color:#111;left:489.73px;transform:translateX(-50%);-webkit-text-stroke:0.12px #111;">Q11</div>
<div class="t" style="top:192.61px;font-size:5.9px;color:#111;font-weight:700;left:509.17px;transform:translateX(-50%);-webkit-text-stroke:0.12px #111;">N</div>
<div class="t" style="top:205.27px;font-size:5.7px;color:#111;font-weight:700;left:509.17px;transform:translateX(-50%);-webkit-text-stroke:0.12px #111;">2N1/</div>
<div class="t" style="top:212.67px;font-size:5.7px;color:#111;font-weight:700;left:509.17px;transform:translateX(-50%);-webkit-text-stroke:0.12px #111;">2N6</div>
<div class="t" style="top:226.47px;font-size:5px;color:#111;left:509.17px;transform:translateX(-50%);-webkit-text-stroke:0.12px #111;">Q12</div>
<div class="t" style="top:192.61px;font-size:5.9px;color:#111;font-weight:700;left:528.62px;transform:translateX(-50%);-webkit-text-stroke:0.12px #111;">C</div>
<div class="t" style="top:205.27px;font-size:5.7px;color:#111;font-weight:700;left:528.62px;transform:translateX(-50%);-webkit-text-stroke:0.12px #111;">2C3/</div>
<div class="t" style="top:212.67px;font-size:5.7px;color:#111;font-weight:700;left:528.62px;transform:translateX(-50%);-webkit-text-stroke:0.12px #111;">2C2b</div>
<div class="t" style="top:226.47px;font-size:5px;color:#111;left:528.62px;transform:translateX(-50%);-webkit-text-stroke:0.12px #111;">Q13</div>
<div class="t" style="top:192.61px;font-size:5.9px;color:#111;font-weight:700;left:548.08px;transform:translateX(-50%);-webkit-text-stroke:0.12px #111;">C</div>
<div class="t" style="top:205.27px;font-size:5.7px;color:#111;font-weight:700;left:548.08px;transform:translateX(-50%);-webkit-text-stroke:0.12px #111;">2C2b/</div>
<div class="t" style="top:212.67px;font-size:5.7px;color:#111;font-weight:700;left:548.08px;transform:translateX(-50%);-webkit-text-stroke:0.12px #111;">2C2a</div>
<div class="t" style="top:226.47px;font-size:5px;color:#111;left:548.08px;transform:translateX(-50%);-webkit-text-stroke:0.12px #111;">Q14</div>
<div class="t" style="top:192.61px;font-size:5.9px;color:#111;font-weight:700;left:567.52px;transform:translateX(-50%);-webkit-text-stroke:0.12px #111;">F</div>
<div class="t" style="top:205.27px;font-size:5.7px;color:#111;font-weight:700;left:567.52px;transform:translateX(-50%);-webkit-text-stroke:0.12px #111;">1F1a/</div>
<div class="t" style="top:212.67px;font-size:5.7px;color:#111;font-weight:700;left:567.52px;transform:translateX(-50%);-webkit-text-stroke:0.12px #111;">2F1a</div>
<div class="t" style="top:226.47px;font-size:5px;color:#111;left:567.52px;transform:translateX(-50%);-webkit-text-stroke:0.12px #111;">Q15</div>
<div class="t" style="top:192.61px;font-size:5.9px;color:#111;font-weight:700;left:586.97px;transform:translateX(-50%);-webkit-text-stroke:0.12px #111;">C</div>
<div class="t" style="top:209.07px;font-size:5.7px;color:#111;font-weight:700;left:586.97px;transform:translateX(-50%);-webkit-text-stroke:0.12px #111;">2C6</div>
<div class="t" style="top:226.47px;font-size:5px;color:#111;left:586.97px;transform:translateX(-50%);-webkit-text-stroke:0.12px #111;">Q16</div>
<div class="t" style="top:192.61px;font-size:5.9px;color:#111;font-weight:700;left:606.42px;transform:translateX(-50%);-webkit-text-stroke:0.12px #111;">C</div>
<div class="t" style="top:209.07px;font-size:5.7px;color:#111;font-weight:700;left:606.42px;transform:translateX(-50%);-webkit-text-stroke:0.12px #111;">2C2b</div>
<div class="t" style="top:226.47px;font-size:5px;color:#111;left:606.42px;transform:translateX(-50%);-webkit-text-stroke:0.12px #111;">Q17</div>
<div class="t" style="top:192.61px;font-size:5.9px;color:#111;font-weight:700;left:625.88px;transform:translateX(-50%);-webkit-text-stroke:0.12px #111;">C</div>
<div class="t" style="top:209.07px;font-size:5.7px;color:#111;font-weight:700;left:625.88px;transform:translateX(-50%);-webkit-text-stroke:0.12px #111;">2C6</div>
<div class="t" style="top:226.47px;font-size:5px;color:#111;left:625.88px;transform:translateX(-50%);-webkit-text-stroke:0.12px #111;">Q18</div>
<div class="t" style="top:192.61px;font-size:5.9px;color:#111;font-weight:700;left:645.33px;transform:translateX(-50%);-webkit-text-stroke:0.12px #111;">C</div>
<div class="t" style="top:205.27px;font-size:5.7px;color:#111;font-weight:700;left:645.33px;transform:translateX(-50%);-webkit-text-stroke:0.12px #111;">2C2b/</div>
<div class="t" style="top:212.67px;font-size:5.7px;color:#111;font-weight:700;left:645.33px;transform:translateX(-50%);-webkit-text-stroke:0.12px #111;">2C2a</div>
<div class="t" style="top:226.47px;font-size:5px;color:#111;left:645.33px;transform:translateX(-50%);-webkit-text-stroke:0.12px #111;">Q19</div>
<div class="t" style="top:192.61px;font-size:5.9px;color:#111;font-weight:700;left:664.77px;transform:translateX(-50%);-webkit-text-stroke:0.12px #111;">C</div>
<div class="t" style="top:205.27px;font-size:5.7px;color:#111;font-weight:700;left:664.77px;transform:translateX(-50%);-webkit-text-stroke:0.12px #111;">2C2b/</div>
<div class="t" style="top:212.67px;font-size:5.7px;color:#111;font-weight:700;left:664.77px;transform:translateX(-50%);-webkit-text-stroke:0.12px #111;">2C2a</div>
<div class="t" style="top:226.47px;font-size:5px;color:#111;left:664.77px;transform:translateX(-50%);-webkit-text-stroke:0.12px #111;">Q20</div>
<div class="t" style="top:192.61px;font-size:5.9px;color:#111;font-weight:700;left:684.22px;transform:translateX(-50%);-webkit-text-stroke:0.12px #111;">F</div>
<div class="t" style="top:205.27px;font-size:5.7px;color:#111;font-weight:700;left:684.22px;transform:translateX(-50%);-webkit-text-stroke:0.12px #111;">2F1a/</div>
<div class="t" style="top:212.67px;font-size:5.7px;color:#111;font-weight:700;left:684.22px;transform:translateX(-50%);-webkit-text-stroke:0.12px #111;">1F1a</div>
<div class="t" style="top:226.47px;font-size:5px;color:#111;left:684.22px;transform:translateX(-50%);-webkit-text-stroke:0.12px #111;">Q21</div>
<div class="t" style="top:192.61px;font-size:5.9px;color:#111;font-weight:700;left:703.67px;transform:translateX(-50%);-webkit-text-stroke:0.12px #111;">F</div>
<div class="t" style="top:209.07px;font-size:5.7px;color:#111;font-weight:700;left:703.67px;transform:translateX(-50%);-webkit-text-stroke:0.12px #111;">2C2b</div>
<div class="t" style="top:226.47px;font-size:5px;color:#111;left:703.67px;transform:translateX(-50%);-webkit-text-stroke:0.12px #111;">Q22</div>
<div class="t" style="top:192.61px;font-size:5.9px;color:#111;font-weight:700;left:723.12px;transform:translateX(-50%);-webkit-text-stroke:0.12px #111;">C</div>
<div class="t" style="top:209.07px;font-size:5.7px;color:#111;font-weight:700;left:723.12px;transform:translateX(-50%);-webkit-text-stroke:0.12px #111;">2F1a</div>
<div class="t" style="top:226.47px;font-size:5px;color:#111;left:723.12px;transform:translateX(-50%);-webkit-text-stroke:0.12px #111;">Q23</div>
<div class="t" style="top:192.61px;font-size:5.9px;color:#111;font-weight:700;left:742.58px;transform:translateX(-50%);-webkit-text-stroke:0.12px #111;">C</div>
<div class="t" style="top:209.07px;font-size:5.7px;color:#111;font-weight:700;left:742.58px;transform:translateX(-50%);-webkit-text-stroke:0.12px #111;">2C2b</div>
<div class="t" style="top:226.47px;font-size:5px;color:#111;left:742.58px;transform:translateX(-50%);-webkit-text-stroke:0.12px #111;">Q24</div>
<div class="t" style="top:192.61px;font-size:5.9px;color:#111;font-weight:700;left:762.02px;transform:translateX(-50%);-webkit-text-stroke:0.12px #111;">C</div>
<div class="t" style="top:205.27px;font-size:5.7px;color:#111;font-weight:700;left:762.02px;transform:translateX(-50%);-webkit-text-stroke:0.12px #111;">2C3/</div>
<div class="t" style="top:212.67px;font-size:5.7px;color:#111;font-weight:700;left:762.02px;transform:translateX(-50%);-webkit-text-stroke:0.12px #111;">2C2b</div>
<div class="t" style="top:226.47px;font-size:5px;color:#111;left:762.02px;transform:translateX(-50%);-webkit-text-stroke:0.12px #111;">Q25</div>
<div class="t" style="top:260.87px;font-size:6.3px;color:#10283a;left:284.7px;transform:translateX(-100%);">0</div>
<div class="t" style="top:268.37px;font-size:6.3px;color:#10283a;left:284.7px;transform:translateX(-100%);">0</div>
<div class="t" style="top:275.87px;font-size:6.3px;color:#10283a;left:284.7px;transform:translateX(-100%);">0</div>
<div class="t" style="top:283.37px;font-size:6.3px;color:#10283a;left:284.7px;transform:translateX(-100%);">0</div>
<div class="t" style="top:290.87px;font-size:6.3px;color:#10283a;left:284.7px;transform:translateX(-100%);">0</div>
<div class="t" style="top:298.37px;font-size:6.3px;color:#10283a;left:284.7px;transform:translateX(-100%);">0</div>
<div class="t" style="top:305.87px;font-size:6.3px;color:#10283a;left:284.7px;transform:translateX(-100%);">0</div>
<div class="t" style="top:313.37px;font-size:6.3px;color:#10283a;left:284.7px;transform:translateX(-100%);">0</div>
<div class="t" style="top:320.87px;font-size:6.3px;color:#10283a;left:284.7px;transform:translateX(-100%);">0</div>
<div class="t" style="top:328.37px;font-size:6.3px;color:#10283a;left:284.7px;transform:translateX(-100%);">0</div>
<div class="t" style="top:335.87px;font-size:6.3px;color:#10283a;left:284.7px;transform:translateX(-100%);">0</div>
<div class="t" style="top:343.37px;font-size:6.3px;color:#10283a;left:284.7px;transform:translateX(-100%);">0</div>
<div class="t" style="top:350.87px;font-size:6.3px;color:#10283a;left:284.7px;transform:translateX(-100%);">0</div>
<div class="t" style="top:358.37px;font-size:6.3px;color:#10283a;left:284.7px;transform:translateX(-100%);">0</div>
<div class="t" style="top:365.87px;font-size:6.3px;color:#10283a;left:284.7px;transform:translateX(-100%);">0</div>
<div class="t" style="top:373.37px;font-size:6.3px;color:#10283a;left:284.7px;transform:translateX(-100%);">0</div>
<div class="t" style="top:380.87px;font-size:6.3px;color:#10283a;left:284.7px;transform:translateX(-100%);">0</div>
<div class="t" style="top:388.37px;font-size:6.3px;color:#10283a;left:284.7px;transform:translateX(-100%);">0</div>
<div class="t" style="top:395.87px;font-size:6.3px;color:#10283a;left:284.7px;transform:translateX(-100%);">0</div>
<div class="t" style="top:403.37px;font-size:6.3px;color:#10283a;left:284.7px;transform:translateX(-100%);">0</div>
<div class="t" style="top:410.87px;font-size:6.3px;color:#10283a;left:284.7px;transform:translateX(-100%);">0</div>
<div class="t" style="top:418.37px;font-size:6.3px;color:#10283a;left:284.7px;transform:translateX(-100%);">0</div>
<div class="t" style="top:425.87px;font-size:6.3px;color:#10283a;left:284.7px;transform:translateX(-100%);">0</div>
<div class="t" style="top:433.37px;font-size:6.3px;color:#10283a;left:284.7px;transform:translateX(-100%);">0</div>
<div class="t" style="top:440.87px;font-size:6.3px;color:#10283a;left:284.7px;transform:translateX(-100%);">0</div>
<div class="t" style="top:448.37px;font-size:6.3px;color:#10283a;left:284.7px;transform:translateX(-100%);">0</div>
<div class="t" style="top:455.87px;font-size:6.3px;color:#10283a;left:284.7px;transform:translateX(-100%);">0</div>
<div class="t" style="top:463.37px;font-size:6.3px;color:#10283a;left:284.7px;transform:translateX(-100%);">0</div>
<div class="t" style="top:470.87px;font-size:6.3px;color:#10283a;left:284.7px;transform:translateX(-100%);">0</div>
<div class="t" style="top:478.37px;font-size:6.3px;color:#10283a;left:284.7px;transform:translateX(-100%);">0</div>
<div class="t" style="top:485.87px;font-size:6.3px;color:#10283a;left:284.7px;transform:translateX(-100%);">0</div>
<div class="t" style="top:160.17px;font-size:7.6px;color:#fff;font-weight:700;left:774.7px;transform-origin:0 50%;transform:scaleX(.78);">twinkl</div>
<div class="t" style="top:163.88px;font-size:3.45px;color:#222;font-weight:700;letter-spacing:0.09px;left:797.3px;">visit twinkl.com</div>
<div class="t" style="top:209.17px;font-size:5.7px;color:#111;font-weight:700;letter-spacing:0.12px;left:947.06px;transform:translateX(-50%);">Breakdown of Maths Content Domains</div>
<div class="t" style="top:229.44px;font-size:5.45px;color:#111;font-weight:700;letter-spacing:0.06px;left:824.19px;transform:translateX(-50%);">N:</div>
<div class="t" style="top:236.89px;font-size:5.45px;color:#111;font-weight:700;letter-spacing:0.06px;left:824.19px;transform:translateX(-50%);">Number and</div>
<div class="t" style="top:244.34px;font-size:5.45px;color:#111;font-weight:700;letter-spacing:0.06px;left:824.19px;transform:translateX(-50%);">Place Value</div>
<div class="t" style="top:261.09px;font-size:5.8px;color:#222;left:843.27px;transform:translateX(-100%);">0%</div>
<div class="t" style="top:268.59px;font-size:5.8px;color:#222;left:843.27px;transform:translateX(-100%);">0%</div>
<div class="t" style="top:276.09px;font-size:5.8px;color:#222;left:843.27px;transform:translateX(-100%);">0%</div>
<div class="t" style="top:283.59px;font-size:5.8px;color:#222;left:843.27px;transform:translateX(-100%);">0%</div>
<div class="t" style="top:291.09px;font-size:5.8px;color:#222;left:843.27px;transform:translateX(-100%);">0%</div>
<div class="t" style="top:298.59px;font-size:5.8px;color:#222;left:843.27px;transform:translateX(-100%);">0%</div>
<div class="t" style="top:306.09px;font-size:5.8px;color:#222;left:843.27px;transform:translateX(-100%);">0%</div>
<div class="t" style="top:313.59px;font-size:5.8px;color:#222;left:843.27px;transform:translateX(-100%);">0%</div>
<div class="t" style="top:321.09px;font-size:5.8px;color:#222;left:843.27px;transform:translateX(-100%);">0%</div>
<div class="t" style="top:328.59px;font-size:5.8px;color:#222;left:843.27px;transform:translateX(-100%);">0%</div>
<div class="t" style="top:336.09px;font-size:5.8px;color:#222;left:843.27px;transform:translateX(-100%);">0%</div>
<div class="t" style="top:343.59px;font-size:5.8px;color:#222;left:843.27px;transform:translateX(-100%);">0%</div>
<div class="t" style="top:351.09px;font-size:5.8px;color:#222;left:843.27px;transform:translateX(-100%);">0%</div>
<div class="t" style="top:358.59px;font-size:5.8px;color:#222;left:843.27px;transform:translateX(-100%);">0%</div>
<div class="t" style="top:366.09px;font-size:5.8px;color:#222;left:843.27px;transform:translateX(-100%);">0%</div>
<div class="t" style="top:373.59px;font-size:5.8px;color:#222;left:843.27px;transform:translateX(-100%);">0%</div>
<div class="t" style="top:381.09px;font-size:5.8px;color:#222;left:843.27px;transform:translateX(-100%);">0%</div>
<div class="t" style="top:388.59px;font-size:5.8px;color:#222;left:843.27px;transform:translateX(-100%);">0%</div>
<div class="t" style="top:396.09px;font-size:5.8px;color:#222;left:843.27px;transform:translateX(-100%);">0%</div>
<div class="t" style="top:403.59px;font-size:5.8px;color:#222;left:843.27px;transform:translateX(-100%);">0%</div>
<div class="t" style="top:411.09px;font-size:5.8px;color:#222;left:843.27px;transform:translateX(-100%);">0%</div>
<div class="t" style="top:418.59px;font-size:5.8px;color:#222;left:843.27px;transform:translateX(-100%);">0%</div>
<div class="t" style="top:426.09px;font-size:5.8px;color:#222;left:843.27px;transform:translateX(-100%);">0%</div>
<div class="t" style="top:433.59px;font-size:5.8px;color:#222;left:843.27px;transform:translateX(-100%);">0%</div>
<div class="t" style="top:441.09px;font-size:5.8px;color:#222;left:843.27px;transform:translateX(-100%);">0%</div>
<div class="t" style="top:448.59px;font-size:5.8px;color:#222;left:843.27px;transform:translateX(-100%);">0%</div>
<div class="t" style="top:456.09px;font-size:5.8px;color:#222;left:843.27px;transform:translateX(-100%);">0%</div>
<div class="t" style="top:463.59px;font-size:5.8px;color:#222;left:843.27px;transform:translateX(-100%);">0%</div>
<div class="t" style="top:471.09px;font-size:5.8px;color:#222;left:843.27px;transform:translateX(-100%);">0%</div>
<div class="t" style="top:478.59px;font-size:5.8px;color:#222;left:843.27px;transform:translateX(-100%);">0%</div>
<div class="t" style="top:486.09px;font-size:5.8px;color:#222;left:843.27px;transform:translateX(-100%);">0%</div>
<div class="t" style="top:229.44px;font-size:5.45px;color:#111;font-weight:700;letter-spacing:0.06px;left:865.16px;transform:translateX(-50%);">C:</div>
<div class="t" style="top:236.89px;font-size:5.45px;color:#111;font-weight:700;letter-spacing:0.06px;left:865.16px;transform:translateX(-50%);">+, -, ×, ÷</div>
<div class="t" style="top:244.34px;font-size:5.45px;color:#111;font-weight:700;letter-spacing:0.06px;left:865.16px;transform:translateX(-50%);">(Calculations)</div>
<div class="t" style="top:261.09px;font-size:5.8px;color:#222;left:884.24px;transform:translateX(-100%);">0%</div>
<div class="t" style="top:268.59px;font-size:5.8px;color:#222;left:884.24px;transform:translateX(-100%);">0%</div>
<div class="t" style="top:276.09px;font-size:5.8px;color:#222;left:884.24px;transform:translateX(-100%);">0%</div>
<div class="t" style="top:283.59px;font-size:5.8px;color:#222;left:884.24px;transform:translateX(-100%);">0%</div>
<div class="t" style="top:291.09px;font-size:5.8px;color:#222;left:884.24px;transform:translateX(-100%);">0%</div>
<div class="t" style="top:298.59px;font-size:5.8px;color:#222;left:884.24px;transform:translateX(-100%);">0%</div>
<div class="t" style="top:306.09px;font-size:5.8px;color:#222;left:884.24px;transform:translateX(-100%);">0%</div>
<div class="t" style="top:313.59px;font-size:5.8px;color:#222;left:884.24px;transform:translateX(-100%);">0%</div>
<div class="t" style="top:321.09px;font-size:5.8px;color:#222;left:884.24px;transform:translateX(-100%);">0%</div>
<div class="t" style="top:328.59px;font-size:5.8px;color:#222;left:884.24px;transform:translateX(-100%);">0%</div>
<div class="t" style="top:336.09px;font-size:5.8px;color:#222;left:884.24px;transform:translateX(-100%);">0%</div>
<div class="t" style="top:343.59px;font-size:5.8px;color:#222;left:884.24px;transform:translateX(-100%);">0%</div>
<div class="t" style="top:351.09px;font-size:5.8px;color:#222;left:884.24px;transform:translateX(-100%);">0%</div>
<div class="t" style="top:358.59px;font-size:5.8px;color:#222;left:884.24px;transform:translateX(-100%);">0%</div>
<div class="t" style="top:366.09px;font-size:5.8px;color:#222;left:884.24px;transform:translateX(-100%);">0%</div>
<div class="t" style="top:373.59px;font-size:5.8px;color:#222;left:884.24px;transform:translateX(-100%);">0%</div>
<div class="t" style="top:381.09px;font-size:5.8px;color:#222;left:884.24px;transform:translateX(-100%);">0%</div>
<div class="t" style="top:388.59px;font-size:5.8px;color:#222;left:884.24px;transform:translateX(-100%);">0%</div>
<div class="t" style="top:396.09px;font-size:5.8px;color:#222;left:884.24px;transform:translateX(-100%);">0%</div>
<div class="t" style="top:403.59px;font-size:5.8px;color:#222;left:884.24px;transform:translateX(-100%);">0%</div>
<div class="t" style="top:411.09px;font-size:5.8px;color:#222;left:884.24px;transform:translateX(-100%);">0%</div>
<div class="t" style="top:418.59px;font-size:5.8px;color:#222;left:884.24px;transform:translateX(-100%);">0%</div>
<div class="t" style="top:426.09px;font-size:5.8px;color:#222;left:884.24px;transform:translateX(-100%);">0%</div>
<div class="t" style="top:433.59px;font-size:5.8px;color:#222;left:884.24px;transform:translateX(-100%);">0%</div>
<div class="t" style="top:441.09px;font-size:5.8px;color:#222;left:884.24px;transform:translateX(-100%);">0%</div>
<div class="t" style="top:448.59px;font-size:5.8px;color:#222;left:884.24px;transform:translateX(-100%);">0%</div>
<div class="t" style="top:456.09px;font-size:5.8px;color:#222;left:884.24px;transform:translateX(-100%);">0%</div>
<div class="t" style="top:463.59px;font-size:5.8px;color:#222;left:884.24px;transform:translateX(-100%);">0%</div>
<div class="t" style="top:471.09px;font-size:5.8px;color:#222;left:884.24px;transform:translateX(-100%);">0%</div>
<div class="t" style="top:478.59px;font-size:5.8px;color:#222;left:884.24px;transform:translateX(-100%);">0%</div>
<div class="t" style="top:486.09px;font-size:5.8px;color:#222;left:884.24px;transform:translateX(-100%);">0%</div>
<div class="t" style="top:233.16px;font-size:5.45px;color:#111;font-weight:700;letter-spacing:0.06px;left:906.12px;transform:translateX(-50%);">F:</div>
<div class="t" style="top:240.61px;font-size:5.45px;color:#111;font-weight:700;letter-spacing:0.06px;left:906.12px;transform:translateX(-50%);">Fractions</div>
<div class="t" style="top:261.09px;font-size:5.8px;color:#222;left:925.21px;transform:translateX(-100%);">0%</div>
<div class="t" style="top:268.59px;font-size:5.8px;color:#222;left:925.21px;transform:translateX(-100%);">0%</div>
<div class="t" style="top:276.09px;font-size:5.8px;color:#222;left:925.21px;transform:translateX(-100%);">0%</div>
<div class="t" style="top:283.59px;font-size:5.8px;color:#222;left:925.21px;transform:translateX(-100%);">0%</div>
<div class="t" style="top:291.09px;font-size:5.8px;color:#222;left:925.21px;transform:translateX(-100%);">0%</div>
<div class="t" style="top:298.59px;font-size:5.8px;color:#222;left:925.21px;transform:translateX(-100%);">0%</div>
<div class="t" style="top:306.09px;font-size:5.8px;color:#222;left:925.21px;transform:translateX(-100%);">0%</div>
<div class="t" style="top:313.59px;font-size:5.8px;color:#222;left:925.21px;transform:translateX(-100%);">0%</div>
<div class="t" style="top:321.09px;font-size:5.8px;color:#222;left:925.21px;transform:translateX(-100%);">0%</div>
<div class="t" style="top:328.59px;font-size:5.8px;color:#222;left:925.21px;transform:translateX(-100%);">0%</div>
<div class="t" style="top:336.09px;font-size:5.8px;color:#222;left:925.21px;transform:translateX(-100%);">0%</div>
<div class="t" style="top:343.59px;font-size:5.8px;color:#222;left:925.21px;transform:translateX(-100%);">0%</div>
<div class="t" style="top:351.09px;font-size:5.8px;color:#222;left:925.21px;transform:translateX(-100%);">0%</div>
<div class="t" style="top:358.59px;font-size:5.8px;color:#222;left:925.21px;transform:translateX(-100%);">0%</div>
<div class="t" style="top:366.09px;font-size:5.8px;color:#222;left:925.21px;transform:translateX(-100%);">0%</div>
<div class="t" style="top:373.59px;font-size:5.8px;color:#222;left:925.21px;transform:translateX(-100%);">0%</div>
<div class="t" style="top:381.09px;font-size:5.8px;color:#222;left:925.21px;transform:translateX(-100%);">0%</div>
<div class="t" style="top:388.59px;font-size:5.8px;color:#222;left:925.21px;transform:translateX(-100%);">0%</div>
<div class="t" style="top:396.09px;font-size:5.8px;color:#222;left:925.21px;transform:translateX(-100%);">0%</div>
<div class="t" style="top:403.59px;font-size:5.8px;color:#222;left:925.21px;transform:translateX(-100%);">0%</div>
<div class="t" style="top:411.09px;font-size:5.8px;color:#222;left:925.21px;transform:translateX(-100%);">0%</div>
<div class="t" style="top:418.59px;font-size:5.8px;color:#222;left:925.21px;transform:translateX(-100%);">0%</div>
<div class="t" style="top:426.09px;font-size:5.8px;color:#222;left:925.21px;transform:translateX(-100%);">0%</div>
<div class="t" style="top:433.59px;font-size:5.8px;color:#222;left:925.21px;transform:translateX(-100%);">0%</div>
<div class="t" style="top:441.09px;font-size:5.8px;color:#222;left:925.21px;transform:translateX(-100%);">0%</div>
<div class="t" style="top:448.59px;font-size:5.8px;color:#222;left:925.21px;transform:translateX(-100%);">0%</div>
<div class="t" style="top:456.09px;font-size:5.8px;color:#222;left:925.21px;transform:translateX(-100%);">0%</div>
<div class="t" style="top:463.59px;font-size:5.8px;color:#222;left:925.21px;transform:translateX(-100%);">0%</div>
<div class="t" style="top:471.09px;font-size:5.8px;color:#222;left:925.21px;transform:translateX(-100%);">0%</div>
<div class="t" style="top:478.59px;font-size:5.8px;color:#222;left:925.21px;transform:translateX(-100%);">0%</div>
<div class="t" style="top:486.09px;font-size:5.8px;color:#222;left:925.21px;transform:translateX(-100%);">0%</div>
<div class="t" style="top:229.44px;font-size:5.45px;color:#111;font-weight:700;letter-spacing:0.06px;left:947.1px;transform:translateX(-50%);">M:</div>
<div class="t" style="top:236.89px;font-size:5.45px;color:#111;font-weight:700;letter-spacing:0.06px;left:947.1px;transform:translateX(-50%);">Measuremen</div>
<div class="t" style="top:244.34px;font-size:5.45px;color:#111;font-weight:700;letter-spacing:0.06px;left:947.1px;transform:translateX(-50%);">t</div>
<div class="t" style="top:261.09px;font-size:5.8px;color:#222;left:947px;transform:translateX(-50%);">N/A</div>
<div class="t" style="top:268.59px;font-size:5.8px;color:#222;left:947px;transform:translateX(-50%);">N/A</div>
<div class="t" style="top:276.09px;font-size:5.8px;color:#222;left:947px;transform:translateX(-50%);">N/A</div>
<div class="t" style="top:283.59px;font-size:5.8px;color:#222;left:947px;transform:translateX(-50%);">N/A</div>
<div class="t" style="top:291.09px;font-size:5.8px;color:#222;left:947px;transform:translateX(-50%);">N/A</div>
<div class="t" style="top:298.59px;font-size:5.8px;color:#222;left:947px;transform:translateX(-50%);">N/A</div>
<div class="t" style="top:306.09px;font-size:5.8px;color:#222;left:947px;transform:translateX(-50%);">N/A</div>
<div class="t" style="top:313.59px;font-size:5.8px;color:#222;left:947px;transform:translateX(-50%);">N/A</div>
<div class="t" style="top:321.09px;font-size:5.8px;color:#222;left:947px;transform:translateX(-50%);">N/A</div>
<div class="t" style="top:328.59px;font-size:5.8px;color:#222;left:947px;transform:translateX(-50%);">N/A</div>
<div class="t" style="top:336.09px;font-size:5.8px;color:#222;left:947px;transform:translateX(-50%);">N/A</div>
<div class="t" style="top:343.59px;font-size:5.8px;color:#222;left:947px;transform:translateX(-50%);">N/A</div>
<div class="t" style="top:351.09px;font-size:5.8px;color:#222;left:947px;transform:translateX(-50%);">N/A</div>
<div class="t" style="top:358.59px;font-size:5.8px;color:#222;left:947px;transform:translateX(-50%);">N/A</div>
<div class="t" style="top:366.09px;font-size:5.8px;color:#222;left:947px;transform:translateX(-50%);">N/A</div>
<div class="t" style="top:373.59px;font-size:5.8px;color:#222;left:947px;transform:translateX(-50%);">N/A</div>
<div class="t" style="top:381.09px;font-size:5.8px;color:#222;left:947px;transform:translateX(-50%);">N/A</div>
<div class="t" style="top:388.59px;font-size:5.8px;color:#222;left:947px;transform:translateX(-50%);">N/A</div>
<div class="t" style="top:396.09px;font-size:5.8px;color:#222;left:947px;transform:translateX(-50%);">N/A</div>
<div class="t" style="top:403.59px;font-size:5.8px;color:#222;left:947px;transform:translateX(-50%);">N/A</div>
<div class="t" style="top:411.09px;font-size:5.8px;color:#222;left:947px;transform:translateX(-50%);">N/A</div>
<div class="t" style="top:418.59px;font-size:5.8px;color:#222;left:947px;transform:translateX(-50%);">N/A</div>
<div class="t" style="top:426.09px;font-size:5.8px;color:#222;left:947px;transform:translateX(-50%);">N/A</div>
<div class="t" style="top:433.59px;font-size:5.8px;color:#222;left:947px;transform:translateX(-50%);">N/A</div>
<div class="t" style="top:441.09px;font-size:5.8px;color:#222;left:947px;transform:translateX(-50%);">N/A</div>
<div class="t" style="top:448.59px;font-size:5.8px;color:#222;left:947px;transform:translateX(-50%);">N/A</div>
<div class="t" style="top:456.09px;font-size:5.8px;color:#222;left:947px;transform:translateX(-50%);">N/A</div>
<div class="t" style="top:463.59px;font-size:5.8px;color:#222;left:947px;transform:translateX(-50%);">N/A</div>
<div class="t" style="top:471.09px;font-size:5.8px;color:#222;left:947px;transform:translateX(-50%);">N/A</div>
<div class="t" style="top:478.59px;font-size:5.8px;color:#222;left:947px;transform:translateX(-50%);">N/A</div>
<div class="t" style="top:486.09px;font-size:5.8px;color:#222;left:947px;transform:translateX(-50%);">N/A</div>
<div class="t" style="top:225.71px;font-size:5.45px;color:#111;font-weight:700;letter-spacing:0.06px;left:988.07px;transform:translateX(-50%);">G:</div>
<div class="t" style="top:233.16px;font-size:5.45px;color:#111;font-weight:700;letter-spacing:0.06px;left:988.07px;transform:translateX(-50%);">Geometry</div>
<div class="t" style="top:240.61px;font-size:5.45px;color:#111;font-weight:700;letter-spacing:0.06px;left:988.07px;transform:translateX(-50%);">Properties of</div>
<div class="t" style="top:248.06px;font-size:5.45px;color:#111;font-weight:700;letter-spacing:0.06px;left:988.07px;transform:translateX(-50%);">Shape</div>
<div class="t" style="top:261.09px;font-size:5.8px;color:#222;left:987.97px;transform:translateX(-50%);">N/A</div>
<div class="t" style="top:268.59px;font-size:5.8px;color:#222;left:987.97px;transform:translateX(-50%);">N/A</div>
<div class="t" style="top:276.09px;font-size:5.8px;color:#222;left:987.97px;transform:translateX(-50%);">N/A</div>
<div class="t" style="top:283.59px;font-size:5.8px;color:#222;left:987.97px;transform:translateX(-50%);">N/A</div>
<div class="t" style="top:291.09px;font-size:5.8px;color:#222;left:987.97px;transform:translateX(-50%);">N/A</div>
<div class="t" style="top:298.59px;font-size:5.8px;color:#222;left:987.97px;transform:translateX(-50%);">N/A</div>
<div class="t" style="top:306.09px;font-size:5.8px;color:#222;left:987.97px;transform:translateX(-50%);">N/A</div>
<div class="t" style="top:313.59px;font-size:5.8px;color:#222;left:987.97px;transform:translateX(-50%);">N/A</div>
<div class="t" style="top:321.09px;font-size:5.8px;color:#222;left:987.97px;transform:translateX(-50%);">N/A</div>
<div class="t" style="top:328.59px;font-size:5.8px;color:#222;left:987.97px;transform:translateX(-50%);">N/A</div>
<div class="t" style="top:336.09px;font-size:5.8px;color:#222;left:987.97px;transform:translateX(-50%);">N/A</div>
<div class="t" style="top:343.59px;font-size:5.8px;color:#222;left:987.97px;transform:translateX(-50%);">N/A</div>
<div class="t" style="top:351.09px;font-size:5.8px;color:#222;left:987.97px;transform:translateX(-50%);">N/A</div>
<div class="t" style="top:358.59px;font-size:5.8px;color:#222;left:987.97px;transform:translateX(-50%);">N/A</div>
<div class="t" style="top:366.09px;font-size:5.8px;color:#222;left:987.97px;transform:translateX(-50%);">N/A</div>
<div class="t" style="top:373.59px;font-size:5.8px;color:#222;left:987.97px;transform:translateX(-50%);">N/A</div>
<div class="t" style="top:381.09px;font-size:5.8px;color:#222;left:987.97px;transform:translateX(-50%);">N/A</div>
<div class="t" style="top:388.59px;font-size:5.8px;color:#222;left:987.97px;transform:translateX(-50%);">N/A</div>
<div class="t" style="top:396.09px;font-size:5.8px;color:#222;left:987.97px;transform:translateX(-50%);">N/A</div>
<div class="t" style="top:403.59px;font-size:5.8px;color:#222;left:987.97px;transform:translateX(-50%);">N/A</div>
<div class="t" style="top:411.09px;font-size:5.8px;color:#222;left:987.97px;transform:translateX(-50%);">N/A</div>
<div class="t" style="top:418.59px;font-size:5.8px;color:#222;left:987.97px;transform:translateX(-50%);">N/A</div>
<div class="t" style="top:426.09px;font-size:5.8px;color:#222;left:987.97px;transform:translateX(-50%);">N/A</div>
<div class="t" style="top:433.59px;font-size:5.8px;color:#222;left:987.97px;transform:translateX(-50%);">N/A</div>
<div class="t" style="top:441.09px;font-size:5.8px;color:#222;left:987.97px;transform:translateX(-50%);">N/A</div>
<div class="t" style="top:448.59px;font-size:5.8px;color:#222;left:987.97px;transform:translateX(-50%);">N/A</div>
<div class="t" style="top:456.09px;font-size:5.8px;color:#222;left:987.97px;transform:translateX(-50%);">N/A</div>
<div class="t" style="top:463.59px;font-size:5.8px;color:#222;left:987.97px;transform:translateX(-50%);">N/A</div>
<div class="t" style="top:471.09px;font-size:5.8px;color:#222;left:987.97px;transform:translateX(-50%);">N/A</div>
<div class="t" style="top:478.59px;font-size:5.8px;color:#222;left:987.97px;transform:translateX(-50%);">N/A</div>
<div class="t" style="top:486.09px;font-size:5.8px;color:#222;left:987.97px;transform:translateX(-50%);">N/A</div>
<div class="t" style="top:225.71px;font-size:5.45px;color:#111;font-weight:700;letter-spacing:0.06px;left:1029.03px;transform:translateX(-50%);">P:</div>
<div class="t" style="top:233.16px;font-size:5.45px;color:#111;font-weight:700;letter-spacing:0.06px;left:1029.03px;transform:translateX(-50%);">Geometry</div>
<div class="t" style="top:240.61px;font-size:5.45px;color:#111;font-weight:700;letter-spacing:0.06px;left:1029.03px;transform:translateX(-50%);">Position and</div>
<div class="t" style="top:248.06px;font-size:5.45px;color:#111;font-weight:700;letter-spacing:0.06px;left:1029.03px;transform:translateX(-50%);">Direction</div>
<div class="t" style="top:261.09px;font-size:5.8px;color:#222;left:1028.93px;transform:translateX(-50%);">N/A</div>
<div class="t" style="top:268.59px;font-size:5.8px;color:#222;left:1028.93px;transform:translateX(-50%);">N/A</div>
<div class="t" style="top:276.09px;font-size:5.8px;color:#222;left:1028.93px;transform:translateX(-50%);">N/A</div>
<div class="t" style="top:283.59px;font-size:5.8px;color:#222;left:1028.93px;transform:translateX(-50%);">N/A</div>
<div class="t" style="top:291.09px;font-size:5.8px;color:#222;left:1028.93px;transform:translateX(-50%);">N/A</div>
<div class="t" style="top:298.59px;font-size:5.8px;color:#222;left:1028.93px;transform:translateX(-50%);">N/A</div>
<div class="t" style="top:306.09px;font-size:5.8px;color:#222;left:1028.93px;transform:translateX(-50%);">N/A</div>
<div class="t" style="top:313.59px;font-size:5.8px;color:#222;left:1028.93px;transform:translateX(-50%);">N/A</div>
<div class="t" style="top:321.09px;font-size:5.8px;color:#222;left:1028.93px;transform:translateX(-50%);">N/A</div>
<div class="t" style="top:328.59px;font-size:5.8px;color:#222;left:1028.93px;transform:translateX(-50%);">N/A</div>
<div class="t" style="top:336.09px;font-size:5.8px;color:#222;left:1028.93px;transform:translateX(-50%);">N/A</div>
<div class="t" style="top:343.59px;font-size:5.8px;color:#222;left:1028.93px;transform:translateX(-50%);">N/A</div>
<div class="t" style="top:351.09px;font-size:5.8px;color:#222;left:1028.93px;transform:translateX(-50%);">N/A</div>
<div class="t" style="top:358.59px;font-size:5.8px;color:#222;left:1028.93px;transform:translateX(-50%);">N/A</div>
<div class="t" style="top:366.09px;font-size:5.8px;color:#222;left:1028.93px;transform:translateX(-50%);">N/A</div>
<div class="t" style="top:373.59px;font-size:5.8px;color:#222;left:1028.93px;transform:translateX(-50%);">N/A</div>
<div class="t" style="top:381.09px;font-size:5.8px;color:#222;left:1028.93px;transform:translateX(-50%);">N/A</div>
<div class="t" style="top:388.59px;font-size:5.8px;color:#222;left:1028.93px;transform:translateX(-50%);">N/A</div>
<div class="t" style="top:396.09px;font-size:5.8px;color:#222;left:1028.93px;transform:translateX(-50%);">N/A</div>
<div class="t" style="top:403.59px;font-size:5.8px;color:#222;left:1028.93px;transform:translateX(-50%);">N/A</div>
<div class="t" style="top:411.09px;font-size:5.8px;color:#222;left:1028.93px;transform:translateX(-50%);">N/A</div>
<div class="t" style="top:418.59px;font-size:5.8px;color:#222;left:1028.93px;transform:translateX(-50%);">N/A</div>
<div class="t" style="top:426.09px;font-size:5.8px;color:#222;left:1028.93px;transform:translateX(-50%);">N/A</div>
<div class="t" style="top:433.59px;font-size:5.8px;color:#222;left:1028.93px;transform:translateX(-50%);">N/A</div>
<div class="t" style="top:441.09px;font-size:5.8px;color:#222;left:1028.93px;transform:translateX(-50%);">N/A</div>
<div class="t" style="top:448.59px;font-size:5.8px;color:#222;left:1028.93px;transform:translateX(-50%);">N/A</div>
<div class="t" style="top:456.09px;font-size:5.8px;color:#222;left:1028.93px;transform:translateX(-50%);">N/A</div>
<div class="t" style="top:463.59px;font-size:5.8px;color:#222;left:1028.93px;transform:translateX(-50%);">N/A</div>
<div class="t" style="top:471.09px;font-size:5.8px;color:#222;left:1028.93px;transform:translateX(-50%);">N/A</div>
<div class="t" style="top:478.59px;font-size:5.8px;color:#222;left:1028.93px;transform:translateX(-50%);">N/A</div>
<div class="t" style="top:486.09px;font-size:5.8px;color:#222;left:1028.93px;transform:translateX(-50%);">N/A</div>
<div class="t" style="top:233.16px;font-size:5.45px;color:#111;font-weight:700;letter-spacing:0.06px;left:1070px;transform:translateX(-50%);">S:</div>
<div class="t" style="top:240.61px;font-size:5.45px;color:#111;font-weight:700;letter-spacing:0.06px;left:1070px;transform:translateX(-50%);">Statistics</div>
<div class="t" style="top:261.09px;font-size:5.8px;color:#222;left:1069.9px;transform:translateX(-50%);">N/A</div>
<div class="t" style="top:268.59px;font-size:5.8px;color:#222;left:1069.9px;transform:translateX(-50%);">N/A</div>
<div class="t" style="top:276.09px;font-size:5.8px;color:#222;left:1069.9px;transform:translateX(-50%);">N/A</div>
<div class="t" style="top:283.59px;font-size:5.8px;color:#222;left:1069.9px;transform:translateX(-50%);">N/A</div>
<div class="t" style="top:291.09px;font-size:5.8px;color:#222;left:1069.9px;transform:translateX(-50%);">N/A</div>
<div class="t" style="top:298.59px;font-size:5.8px;color:#222;left:1069.9px;transform:translateX(-50%);">N/A</div>
<div class="t" style="top:306.09px;font-size:5.8px;color:#222;left:1069.9px;transform:translateX(-50%);">N/A</div>
<div class="t" style="top:313.59px;font-size:5.8px;color:#222;left:1069.9px;transform:translateX(-50%);">N/A</div>
<div class="t" style="top:321.09px;font-size:5.8px;color:#222;left:1069.9px;transform:translateX(-50%);">N/A</div>
<div class="t" style="top:328.59px;font-size:5.8px;color:#222;left:1069.9px;transform:translateX(-50%);">N/A</div>
<div class="t" style="top:336.09px;font-size:5.8px;color:#222;left:1069.9px;transform:translateX(-50%);">N/A</div>
<div class="t" style="top:343.59px;font-size:5.8px;color:#222;left:1069.9px;transform:translateX(-50%);">N/A</div>
<div class="t" style="top:351.09px;font-size:5.8px;color:#222;left:1069.9px;transform:translateX(-50%);">N/A</div>
<div class="t" style="top:358.59px;font-size:5.8px;color:#222;left:1069.9px;transform:translateX(-50%);">N/A</div>
<div class="t" style="top:366.09px;font-size:5.8px;color:#222;left:1069.9px;transform:translateX(-50%);">N/A</div>
<div class="t" style="top:373.59px;font-size:5.8px;color:#222;left:1069.9px;transform:translateX(-50%);">N/A</div>
<div class="t" style="top:381.09px;font-size:5.8px;color:#222;left:1069.9px;transform:translateX(-50%);">N/A</div>
<div class="t" style="top:388.59px;font-size:5.8px;color:#222;left:1069.9px;transform:translateX(-50%);">N/A</div>
<div class="t" style="top:396.09px;font-size:5.8px;color:#222;left:1069.9px;transform:translateX(-50%);">N/A</div>
<div class="t" style="top:403.59px;font-size:5.8px;color:#222;left:1069.9px;transform:translateX(-50%);">N/A</div>
<div class="t" style="top:411.09px;font-size:5.8px;color:#222;left:1069.9px;transform:translateX(-50%);">N/A</div>
<div class="t" style="top:418.59px;font-size:5.8px;color:#222;left:1069.9px;transform:translateX(-50%);">N/A</div>
<div class="t" style="top:426.09px;font-size:5.8px;color:#222;left:1069.9px;transform:translateX(-50%);">N/A</div>
<div class="t" style="top:433.59px;font-size:5.8px;color:#222;left:1069.9px;transform:translateX(-50%);">N/A</div>
<div class="t" style="top:441.09px;font-size:5.8px;color:#222;left:1069.9px;transform:translateX(-50%);">N/A</div>
<div class="t" style="top:448.59px;font-size:5.8px;color:#222;left:1069.9px;transform:translateX(-50%);">N/A</div>
<div class="t" style="top:456.09px;font-size:5.8px;color:#222;left:1069.9px;transform:translateX(-50%);">N/A</div>
<div class="t" style="top:463.59px;font-size:5.8px;color:#222;left:1069.9px;transform:translateX(-50%);">N/A</div>
<div class="t" style="top:471.09px;font-size:5.8px;color:#222;left:1069.9px;transform:translateX(-50%);">N/A</div>
<div class="t" style="top:478.59px;font-size:5.8px;color:#222;left:1069.9px;transform:translateX(-50%);">N/A</div>
<div class="t" style="top:486.09px;font-size:5.8px;color:#222;left:1069.9px;transform:translateX(-50%);">N/A</div>
<div style="left:157px;top:63.2px;width:954px;height:64.4px;background:#f3f2f1;"></div>
<svg width="1260" height="130" viewBox="0 0 1260 130" style="left:0;top:0" fill="none"><path d="M1080.5 34.8L1097.3 51.8M1097.3 34.8L1080.5 51.8" fill="none" stroke="#fff" stroke-width="4.2"/><rect x="190" y="75.4" width="19" height="2.1" fill="#217346"/><path d="M238.4 81V125.4" fill="none" stroke="#d2d0ce" stroke-width="0.9"/><path d="M354 81V125.4" fill="none" stroke="#d2d0ce" stroke-width="0.9"/><path d="M493.8 81V125.4" fill="none" stroke="#d2d0ce" stroke-width="0.9"/><path d="M571.3 81V125.4" fill="none" stroke="#d2d0ce" stroke-width="0.9"/><path d="M814.8 81V125.4" fill="none" stroke="#d2d0ce" stroke-width="0.9"/><path d="M886.5 81V125.4" fill="none" stroke="#d2d0ce" stroke-width="0.9"/><path d="M985.7 81V125.4" fill="none" stroke="#d2d0ce" stroke-width="0.9"/><path d="M1082.3 81V125.4" fill="none" stroke="#d2d0ce" stroke-width="0.9"/><path d="M395.2 84.5V112" fill="none" stroke="#dad8d6" stroke-width="0.7"/><path d="M422.5 84.5V112" fill="none" stroke="#dad8d6" stroke-width="0.7"/><path d="M542 84.5V112" fill="none" stroke="#dad8d6" stroke-width="0.7"/><rect x="164.8" y="84.6" width="10.6" height="11.6" fill="#e9bd63" rx="0.8"/><rect x="167.6" y="82.6" width="5" height="3.6" fill="#5f5f5f" rx="0.8"/><path d="M171.6 88.6h4.6l2.4 2.4v6.6h-7z" fill="#fff" stroke="#7a7a7a" stroke-width="0.6"/><path d="M168.38 109.99h3.24l-1.62 1.78z" fill="#555"/><path d="M184.6 82.6l3.8 4.6M188.4 82.6l-3.8 4.6" fill="none" stroke="#444" stroke-width="0.9"/><circle cx="184.5" cy="88.2" r="1.25" fill="none" stroke="#4a7fc2" stroke-width="0.7"/><circle cx="188.5" cy="88.2" r="1.25" fill="none" stroke="#4a7fc2" stroke-width="0.7"/><rect x="182.8" y="94.6" width="4" height="5" fill="#fff" stroke="#5b7fb5" stroke-width="0.6"/><rect x="185.2" y="96.4" width="4.2" height="5" fill="#e8f0fb" stroke="#5b7fb5" stroke-width="0.6"/><path d="M210.88 97.59h3.24l-1.62 1.78z" fill="#555"/><path d="M184 112.6l3.2-3.4" fill="none" stroke="#d99a2b" stroke-width="1.5"/><path d="M186.6 108.6l2.4-2.4l1.6 1.6l-2.4 2.4z" fill="#555"/><path d="M235.2 120.7h-3v3" fill="none" stroke="#666" stroke-width="0.7"/><path d="M234 122.5l2 2m0-1.8v1.8h-1.8" fill="none" stroke="#555" stroke-width="0.75"/><rect x="242.4" y="85.4" width="60.6" height="10.1" fill="#fff" stroke="#dddbd9" stroke-width="0.6"/><rect x="304.2" y="85.4" width="22" height="10.1" fill="#fff" stroke="#dddbd9" stroke-width="0.6"/><path d="M298.05 89.92h2.7l-1.35 1.49z" fill="#555"/><path d="M320.85 89.92h2.7l-1.35 1.49z" fill="#555"/><path d="M279.05 105.92h2.7l-1.35 1.49z" fill="#555"/><path d="M302.05 105.92h2.7l-1.35 1.49z" fill="#555"/><path d="M324.85 105.92h2.7l-1.35 1.49z" fill="#555"/><path d="M345.05 105.92h2.7l-1.35 1.49z" fill="#555"/><path d="M276.4 109.0V84" fill="none"/><path d="M286.4 100.2V112" fill="none" stroke="#dad8d6" stroke-width="0.6"/><path d="M309.6 100.2V112" fill="none" stroke="#dad8d6" stroke-width="0.6"/><rect x="291.4" y="103.4" width="6.2" height="5.8" fill="none" stroke="#a19f9d" stroke-width="0.6"/><path d="M294.5 103.4v5.8M291.4 106.3h6.2" fill="none" stroke="#a19f9d" stroke-width="0.6" stroke-dasharray="0.8 0.6"/><path d="M315.2 106.4l2.6-3.4l2.6 3.0l-2.4 1.6z" fill="#fff" stroke="#777" stroke-width="0.6"/><path d="M321.2 105.2q1 1.6 0 2.2q-1-.6 0-2.2" fill="#3b78c4"/><rect x="313.2" y="108.2" width="8.8" height="2" fill="#ffef00"/><rect x="333" y="108.2" width="8.2" height="2" fill="#e81123"/><path d="M269.2 109.8h4.4" fill="none" stroke="#444" stroke-width="0.6"/><path d="M334.8 86.2l1.4-1.6l1.4 1.6" fill="none" stroke="#3b78c4" stroke-width="0.7"/><path d="M345.6 85.0l1.2 1.4l1.2-1.4" fill="none" stroke="#3b78c4" stroke-width="0.7"/><path d="M351.3 120.7h-3v3" fill="none" stroke="#666" stroke-width="0.7"/><path d="M350.1 122.5l2 2m0-1.8v1.8h-1.8" fill="none" stroke="#555" stroke-width="0.75"/><rect x="370.1" y="84.2" width="10.9" height="11.6" fill="#cfcdcb" stroke="#9c9a98" stroke-width="0.6"/><rect x="370.1" y="100" width="10.9" height="11.8" fill="#cfcdcb" stroke="#9c9a98" stroke-width="0.6"/><path d="M360.4 86h6.4" fill="none" stroke="#777" stroke-width="0.8"/><path d="M360.4 87.7h6.4" fill="none" stroke="#777" stroke-width="0.8"/><path d="M360.4 89.4h6.4" fill="none" stroke="#777" stroke-width="0.8"/><path d="M372.2 88.4h6.6" fill="none" stroke="#666" stroke-width="0.8"/><path d="M372.2 90.1h6.6" fill="none" stroke="#666" stroke-width="0.8"/><path d="M372.2 91.8h6.6" fill="none" stroke="#666" stroke-width="0.8"/><path d="M384.2 90.6h6.6" fill="none" stroke="#777" stroke-width="0.8"/><path d="M384.2 92.3h6.6" fill="none" stroke="#777" stroke-width="0.8"/><path d="M384.2 94h6.6" fill="none" stroke="#777" stroke-width="0.8"/><path d="M360.4 103h6.6" fill="none" stroke="#777" stroke-width="0.8"/><path d="M360.4 104.7h4.6" fill="none" stroke="#777" stroke-width="0.8"/><path d="M360.4 106.4h6.6" fill="none" stroke="#777" stroke-width="0.8"/><path d="M360.4 108.1h4.6" fill="none" stroke="#777" stroke-width="0.8"/><path d="M372.2 103h6.6" fill="none" stroke="#666" stroke-width="0.8"/><path d="M373.3 104.7h4.4" fill="none" stroke="#666" stroke-width="0.8"/><path d="M372.2 106.4h6.6" fill="none" stroke="#666" stroke-width="0.8"/><path d="M373.3 108.1h4.4" fill="none" stroke="#666" stroke-width="0.8"/><path d="M384.4 103h6.6" fill="none" stroke="#777" stroke-width="0.8"/><path d="M386.4 104.7h4.6" fill="none" stroke="#777" stroke-width="0.8"/><path d="M384.4 106.4h6.6" fill="none" stroke="#777" stroke-width="0.8"/><path d="M386.4 108.1h4.6" fill="none" stroke="#777" stroke-width="0.8"/><path d="M399.8 92.6l5.8-5.8" fill="none" stroke="#444" stroke-width="0.9"/><path d="M400.4 88.4l2.4 2.4M402.6 86.2l2.6 2.6" fill="none" stroke="#555" stroke-width="0.9"/><path d="M404.2 92.8l2.2-.4l-.4-1.8" fill="none" stroke="#444" stroke-width="0.7"/><path d="M409.25 89.12h2.7l-1.35 1.49z" fill="#555"/><rect x="401.6" y="102.2" width="5.6" height="7.2" fill="#d6d4d2"/><path d="M402.6 103.4h4.4" fill="none" stroke="#9a9896" stroke-width="0.6"/><path d="M402.6 105h4.4" fill="none" stroke="#9a9896" stroke-width="0.6"/><path d="M402.6 106.6h4.4" fill="none" stroke="#9a9896" stroke-width="0.6"/><path d="M402.6 108.2h4.4" fill="none" stroke="#9a9896" stroke-width="0.6"/><rect x="413.6" y="102.2" width="5.6" height="7.2" fill="#d6d4d2"/><path d="M414.6 103.4h4.4" fill="none" stroke="#9a9896" stroke-width="0.6"/><path d="M414.6 105h4.4" fill="none" stroke="#9a9896" stroke-width="0.6"/><path d="M414.6 106.6h4.4" fill="none" stroke="#9a9896" stroke-width="0.6"/><path d="M414.6 108.2h4.4" fill="none" stroke="#9a9896" stroke-width="0.6"/><path d="M400 105.8h3.2m-3.2 0l1.2-1.2m-1.2 1.2l1.2 1.2" fill="none" stroke="#2b6cc4" stroke-width="0.7"/><path d="M411.6 105.8h3.2m0 0l-1.2-1.2m1.2 1.2l-1.2 1.2" fill="none" stroke="#2b6cc4" stroke-width="0.7"/><path d="M427.6 87.4v5.6M429.4 87.2h3.2q1.6.2 1.6 1.9q0 1.7-1.6 1.9h-2.2m1.1-1.3l-1.3 1.3l1.3 1.3" fill="none" stroke="#444" stroke-width="0.9"/><rect x="426" y="101.6" width="7.8" height="8" fill="#fff" stroke="#8a8886" stroke-width="0.6"/><rect x="426" y="104.2" width="7.8" height="2.8" fill="#dbe7f6" stroke="#8a8886" stroke-width="0.5"/><path d="M427.6 105.6h4.6" fill="none" stroke="#2b6cc4" stroke-width="0.6"/><path d="M483.55 105.12h2.7l-1.35 1.49z" fill="#555"/><path d="M491 120.7h-3v3" fill="none" stroke="#666" stroke-width="0.7"/><path d="M489.8 122.5l2 2m0-1.8v1.8h-1.8" fill="none" stroke="#555" stroke-width="0.75"/><rect x="498" y="85.2" width="69.6" height="10.2" fill="#fff" stroke="#dddbd9" stroke-width="0.6"/><path d="M562.45 89.73h2.7l-1.35 1.49z" fill="#555"/><rect x="499.6" y="102.2" width="6.8" height="4.8" fill="#fff" stroke="#5b87c6" stroke-width="0.7"/><path d="M501.6 108.6q2.4 1.4 4.2-.4" fill="none" stroke="#e0a92e" stroke-width="0.9"/><circle cx="505.4" cy="107.6" r="1.5" fill="#e8b63e"/><path d="M510.85 105.12h2.7l-1.35 1.49z" fill="#555"/><path d="M546.4 103.4h2.4m-2.4 0l1-1m-1 1l1 1" fill="none" stroke="#2b6cc4" stroke-width="0.7"/><path d="M560.2 108.4h2.4m0 0l-1-1m1 1l-1 1" fill="none" stroke="#2b6cc4" stroke-width="0.7"/><path d="M568.9 120.7h-3v3" fill="none" stroke="#666" stroke-width="0.7"/><path d="M567.7 122.5l2 2m0-1.8v1.8h-1.8" fill="none" stroke="#555" stroke-width="0.75"/><rect x="587.4" y="82.4" width="11.2" height="12.2" fill="#fff" stroke="#9a9896" stroke-width="0.6"/><path d="M591.2 82.4v12.2M594.8 82.4v12.2M587.4 86.4h11.2M587.4 90.4h11.2" fill="none" stroke="#c2c0be" stroke-width="0.5"/><rect x="591.4" y="83" width="3.2" height="3.2" fill="#e8563a"/><rect x="591.4" y="86.8" width="5.6" height="3.2" fill="#3b78c4"/><rect x="591.4" y="90.8" width="2.6" height="3.4" fill="#e8563a"/><rect x="596.4" y="92.4" width="5.2" height="4.8" fill="#fff" stroke="#8a8886" stroke-width="0.6"/><path d="M597.8 96l2.4-2.4" fill="none" stroke="#3b78c4" stroke-width="0.8"/><path d="M607.85 110.23h2.7l-1.35 1.49z" fill="#555"/><rect x="620.6" y="83" width="11.8" height="10.6" fill="#fff" stroke="#8a8886" stroke-width="0.6"/><rect x="624.6" y="86.6" width="7.8" height="7" fill="#9dc0ea"/><path d="M624.6 83v10.6M628.6 83v10.6M620.6 86.6h11.8M620.6 90.2h11.8" fill="none" stroke="#8a8886" stroke-width="0.5"/><path d="M630.4 91.6l4.6-5.6" fill="none" stroke="#555" stroke-width="1.2"/><path d="M625.4 97.0l2.8-3.2l2.8 3.2z" fill="#2b6cc4"/><path d="M632.85 110.23h2.7l-1.35 1.49z" fill="#555"/><rect x="642.4" y="82.8" width="166.8" height="29.2" fill="#fff"/><rect x="643.6" y="83.6" width="51.8" height="12.8" fill="#fff" stroke="#8a8886" stroke-width="0.9"/><rect x="697.8" y="84.4" width="49.2" height="11.4" fill="#ffc7ce"/><rect x="750.6" y="84.4" width="49.2" height="11.4" fill="#c6efce"/><rect x="644.4" y="98.6" width="50.2" height="10.8" fill="#ffeb9c"/><rect x="697.8" y="98.8" width="49.2" height="10.4" fill="#f2f2f2" stroke="#7f7f7f" stroke-width="0.8"/><rect x="751" y="98.8" width="48.6" height="10.4" fill="#a5a5a5" stroke="#555" stroke-width="1.3"/><rect x="802.8" y="82.8" width="6.4" height="29.2" fill="#fff" stroke="#e1dfdd" stroke-width="0.5"/><rect x="802.8" y="82.8" width="6.4" height="9.2" fill="#e9e8e7"/><path d="M804.78 86.99h2.43l-1.22 1.34z" fill="#c0bebc"/><path d="M804.78 96.79h2.43l-1.22 1.34z" fill="#555"/><path d="M804.8 104.4h2.4" fill="none" stroke="#555" stroke-width="0.5"/><path d="M804.78 106.19h2.43l-1.22 1.34z" fill="#555"/><rect x="823.4" y="82.6" width="6.6" height="4.4" fill="#fff" stroke="#8a8886" stroke-width="0.55"/><path d="M826.7 82.6v4.4M823.4 84.8h6.6" fill="none" stroke="#8a8886" stroke-width="0.5"/><rect x="823.4" y="91.2" width="6.6" height="4.4" fill="#fff" stroke="#8a8886" stroke-width="0.55"/><path d="M826.7 91.2v4.4M823.4 93.4h6.6" fill="none" stroke="#8a8886" stroke-width="0.5"/><rect x="828.4" y="86.4" width="7.8" height="3.4" fill="#c9c7c5" stroke="#8a8886" stroke-width="0.5"/><path d="M823.6 86.6v3.2l2.8-1.6z" fill="#2b6cc4"/><rect x="843.6" y="82.6" width="6.6" height="4.4" fill="#fff" stroke="#8a8886" stroke-width="0.55"/><path d="M846.9 82.6v4.4M843.6 84.8h6.6" fill="none" stroke="#8a8886" stroke-width="0.5"/><rect x="843.6" y="91.2" width="6.6" height="4.8" fill="#fff" stroke="#8a8886" stroke-width="0.55"/><path d="M846.9 91.2v4.8M843.6 93.6h6.6" fill="none" stroke="#8a8886" stroke-width="0.5"/><rect x="846.2" y="86.4" width="5.8" height="3.4" fill="#c9c7c5" stroke="#8a8886" stroke-width="0.5"/><path d="M851.2 84.6l6 5.8M857.6 85l-5.6 5.6" fill="none" stroke="#e8563a" stroke-width="1"/><rect x="864.6" y="84.4" width="14" height="11.6" fill="#fff" stroke="#8a8886" stroke-width="0.55"/><path d="M868.8 84.4v11.6M874.4 84.4v11.6M864.6 88h14M864.6 92.4h14" fill="none" stroke="#b8b6b4" stroke-width="0.5"/><rect x="869.2" y="87.6" width="4.2" height="5.4" fill="#2b6cc4"/><path d="M864.6 83h3m7 0h4M868.4 83l-1.2-1m1.2 1l-1.2 1M874.4 83l1.2-1m-1.2 1l1.2 1" fill="none" stroke="#2b6cc4" stroke-width="0.6"/><circle cx="871.4" cy="95.6" r="1.4" fill="#fff" stroke="#8a8886" stroke-width="0.5"/><path d="M827.85 110.23h2.7l-1.35 1.49z" fill="#555"/><path d="M848.85 110.23h2.7l-1.35 1.49z" fill="#555"/><path d="M870.05 110.23h2.7l-1.35 1.49z" fill="#555"/><path d="M898.8 83.8v-1.2h-6.4l3.2 3.2l-3.2 3.2h6.4v-1.2" fill="none" stroke="#333" stroke-width="0.9"/><path d="M931.65 84.73h2.7l-1.35 1.49z" fill="#555"/><rect x="892.2" y="93.6" width="6.8" height="6.8" fill="#fff" stroke="#555" stroke-width="0.7"/><rect x="892.2" y="93.6" width="6.8" height="1.4" fill="#555"/><path d="M895.6 95.8v3.2m0 0l-1.4-1.4m1.4 1.4l1.4-1.4" fill="none" stroke="#2b6cc4" stroke-width="0.8"/><path d="M911.25 96.53h2.7l-1.35 1.49z" fill="#555"/><path d="M893.2 110.6l4.2-4.2" fill="none" stroke="#e8789a" stroke-width="2.2"/><path d="M917.05 108.33h2.7l-1.35 1.49z" fill="#555"/><path d="M950.0 88.2h6.8l-2.6 3v3.2l-1.6 -1v-2.2z" fill="#777"/><path d="M955.05 110.23h2.7l-1.35 1.49z" fill="#555"/><circle cx="972.4" cy="87.2" r="3.9" fill="#fff" stroke="#2b6cc4" stroke-width="1.1"/><path d="M969.6 90.4l-5 5.2" fill="none" stroke="#2b6cc4" stroke-width="1.5"/><path d="M977.85 110.23h2.7l-1.35 1.49z" fill="#555"/><path d="M1005.4 83.2h5.6l2.8 2.8v9.6h-8.4z" fill="#fff" stroke="#3a6fd8" stroke-width="0.7"/><path d="M1007.4 92.2q2.2-2.6 2.6-5.4q.2-1-.4-1q-.8 0-.2 1.6q1 2.6 3.6 3.6" fill="none" stroke="#3a6fd8" stroke-width="0.6"/><path d="M1050 83.2h5.6l2.8 2.8v9.6h-8.4z" fill="#fff" stroke="#3a6fd8" stroke-width="0.7"/><path d="M1052 92.2q2.2-2.6 2.6-5.4q.2-1-.4-1q-.8 0-.2 1.6q1 2.6 3.6 3.6" fill="none" stroke="#3a6fd8" stroke-width="0.6"/><path d="M1012.8 95.6l3.4-3.6l1.6 1.4l-3.4 3.6z" fill="#fff" stroke="#3a6fd8" stroke-width="0.6"/><rect x="1056.2" y="92" width="6.4" height="4.8" fill="#fff" stroke="#3a6fd8" stroke-width="0.7"/><path d="M1056.2 92.4l3.2 2.4l3.2-2.4" fill="none" stroke="#3a6fd8" stroke-width="0.6"/><path d="M1104.6 124.0l2.4-2.4l2.4 2.4" fill="none" stroke="#555" stroke-width="0.8"/><rect x="1074.6" y="66" width="33" height="10.8" fill="#fff" rx="0.8"/><path d="M1078.6 70.8v3.4h4.2v-1.8M1080.2 72.4q.4-2.2 2.8-2.4m0 0l-1.1-1.1m1.1 1.1l-1.1 1.1" fill="none" stroke="#217346" stroke-width="0.6"/><circle cx="508.2" cy="70.0" r="2.8" fill="none" stroke="#555" stroke-width="0.8"/><path d="M507 73.4h2.4M507.2 75h2" fill="none" stroke="#555" stroke-width="0.7"/></svg>
<div class="t" style="top:68.77px;font-size:6.3px;color:#333231;letter-spacing:0.12px;left:164.4px;">File</div>
<div class="t" style="top:68.77px;font-size:6.3px;color:#333;font-weight:700;letter-spacing:0.57px;left:190.2px;">Home</div>
<div class="t" style="top:68.77px;font-size:6.3px;color:#333231;letter-spacing:0.12px;left:222.2px;">Insert</div>
<div class="t" style="top:68.77px;font-size:6.3px;color:#333231;letter-spacing:0.01px;left:254.2px;">Page Layout</div>
<div class="t" style="top:68.77px;font-size:6.3px;color:#333231;letter-spacing:0.02px;left:304.4px;">Formulas</div>
<div class="t" style="top:68.77px;font-size:6.3px;color:#333231;letter-spacing:0.12px;left:344.4px;">Data</div>
<div class="t" style="top:68.77px;font-size:6.3px;color:#333231;letter-spacing:0.12px;left:372.4px;">Review</div>
<div class="t" style="top:68.77px;font-size:6.3px;color:#333231;letter-spacing:0.12px;left:406.7px;">View</div>
<div class="t" style="top:68.77px;font-size:6.3px;color:#333231;letter-spacing:0.12px;left:434.2px;">Help</div>
<div class="t" style="top:68.77px;font-size:6.3px;color:#333231;letter-spacing:0.31px;left:462.2px;">Acrobat</div>
<div class="t" style="top:68.77px;font-size:6.3px;color:#333231;letter-spacing:0.23px;left:519.2px;">Tell me what you want to do</div>
<div class="t" style="top:68.37px;font-size:6.3px;color:#217346;left:1086.2px;">Share</div>
<div class="t" style="top:100.85px;font-size:5.85px;color:#333231;left:170.5px;transform:translateX(-50%);">Paste</div>
<div class="t" style="top:84.05px;font-size:5.85px;color:#333231;left:191.9px;">Cut</div>
<div class="t" style="top:96.35px;font-size:5.85px;color:#333231;left:191.9px;">Copy</div>
<div class="t" style="top:108.15px;font-size:5.85px;color:#333231;left:191.9px;">Format Painter</div>
<div class="t" style="top:120.15px;font-size:5.85px;color:#484644;left:192.7px;transform:translateX(-50%);">Clipboard</div>
<div class="t" style="top:120.15px;font-size:5.85px;color:#484644;left:291.6px;transform:translateX(-50%);">Font</div>
<div class="t" style="top:120.15px;font-size:5.85px;color:#484644;left:419.7px;transform:translateX(-50%);">Alignment</div>
<div class="t" style="top:120.15px;font-size:5.85px;color:#484644;left:528.4px;transform:translateX(-50%);">Number</div>
<div class="t" style="top:120.15px;font-size:5.85px;color:#484644;left:693.3px;transform:translateX(-50%);">Styles</div>
<div class="t" style="top:120.15px;font-size:5.85px;color:#484644;left:850.5px;transform:translateX(-50%);">Cells</div>
<div class="t" style="top:120.15px;font-size:5.85px;color:#484644;left:936px;transform:translateX(-50%);">Editing</div>
<div class="t" style="top:120.15px;font-size:5.85px;color:#484644;left:1034px;transform:translateX(-50%);">Adobe Acrobat</div>
<div class="t" style="top:88.56px;font-size:5.6px;color:#333231;left:244.2px;">Arial</div>
<div class="t" style="top:88.56px;font-size:5.6px;color:#333231;left:306.2px;">12</div>
<div class="t" style="top:103.78px;font-size:6.4px;color:#333;font-weight:700;left:247.2px;transform:translateX(-50%);">B</div>
<div class="t" style="top:103.27px;font-size:7px;color:#333;font-weight:700;font-style:italic;left:259.2px;transform:translateX(-50%);font-family:'Liberation Serif',serif;">I</div>
<div class="t" style="top:103.04px;font-size:6.8px;color:#333;left:271.4px;transform:translateX(-50%);">U</div>
<div class="t" style="top:87.31px;font-size:7.2px;color:#444;left:332.6px;transform:translateX(-50%);">A</div>
<div class="t" style="top:88.32px;font-size:6px;color:#444;left:345px;transform:translateX(-50%);">A</div>
<div class="t" style="top:102.44px;font-size:6.8px;color:#333;font-weight:700;left:337px;transform:translateX(-50%);">A</div>
<div class="t" style="top:87.85px;font-size:5.85px;color:#333231;left:435.9px;">Wrap Text</div>
<div class="t" style="top:103.75px;font-size:5.85px;color:#333231;left:435.9px;">Merge &amp; Center</div>
<div class="t" style="top:88.37px;font-size:5.7px;color:#333231;left:499.8px;">General</div>
<div class="t" style="top:103.41px;font-size:6.6px;color:#555;left:523.2px;transform:translateX(-50%);">%</div>
<div class="t" style="top:101.54px;font-size:7.4px;color:#444;font-weight:700;left:534.6px;transform:translateX(-50%);">,</div>
<div class="t" style="top:103.35px;font-size:3.6px;color:#555;left:551px;transform:translateX(-50%);">.0</div>
<div class="t" style="top:106.95px;font-size:3.6px;color:#555;left:551px;transform:translateX(-50%);">.00</div>
<div class="t" style="top:102.95px;font-size:3.6px;color:#555;left:563.8px;transform:translateX(-50%);">.00</div>
<div class="t" style="top:107.15px;font-size:3.6px;color:#555;left:564.6px;transform:translateX(-50%);">.0</div>
<div class="t" style="top:100.72px;font-size:6px;color:#333231;letter-spacing:0.14px;left:579px;">Conditional</div>
<div class="t" style="top:108.62px;font-size:6px;color:#333231;letter-spacing:0.1px;left:577px;">Formatting</div>
<div class="t" style="top:100.85px;font-size:5.85px;color:#333231;left:627.2px;transform:translateX(-50%);">Format as</div>
<div class="t" style="top:108.75px;font-size:5.85px;color:#333231;left:624.8px;transform:translateX(-50%);">Table</div>
<div class="t" style="top:86.37px;font-size:7px;color:#000;left:646.8px;">Normal</div>
<div class="t" style="top:86.37px;font-size:7px;color:#9c0006;left:699.8px;">Bad</div>
<div class="t" style="top:86.37px;font-size:7px;color:#006100;left:752.6px;">Good</div>
<div class="t" style="top:100.47px;font-size:7px;color:#9c5700;left:646.8px;">Neutral</div>
<div class="t" style="top:100.81px;font-size:6.6px;color:#fa7d00;font-weight:700;left:699.8px;">Calculation</div>
<div class="t" style="top:100.81px;font-size:6.6px;color:#fff;font-weight:700;left:753.2px;">Check Cell</div>
<div class="t" style="top:100.85px;font-size:5.85px;color:#333231;left:829.2px;transform:translateX(-50%);">Insert</div>
<div class="t" style="top:100.85px;font-size:5.85px;color:#333231;left:850.1px;transform:translateX(-50%);">Delete</div>
<div class="t" style="top:100.85px;font-size:5.85px;color:#333231;left:871.5px;transform:translateX(-50%);">Format</div>
<div class="t" style="top:83.25px;font-size:5.85px;color:#333231;left:901.9px;">AutoSum</div>
<div class="t" style="top:95.05px;font-size:5.85px;color:#333231;left:901.9px;">Fill</div>
<div class="t" style="top:106.85px;font-size:5.85px;color:#333231;left:901.9px;">Clear</div>
<div class="t" style="top:100.85px;font-size:5.85px;color:#333231;left:948px;transform:translateX(-50%);">Sort &amp;</div>
<div class="t" style="top:108.75px;font-size:5.85px;color:#333231;left:946.2px;transform:translateX(-50%);">Filter</div>
<div class="t" style="top:100.85px;font-size:5.85px;color:#333231;left:970.2px;transform:translateX(-50%);">Find &amp;</div>
<div class="t" style="top:108.75px;font-size:5.85px;color:#333231;left:967.6px;transform:translateX(-50%);">Select</div>
<div class="t" style="top:82.74px;font-size:7.4px;color:#2b6cc4;font-weight:700;left:944.2px;transform:translateX(-50%);">A</div>
<div class="t" style="top:90.14px;font-size:7.4px;color:#8e44ad;font-weight:700;left:944.2px;transform:translateX(-50%);">Z</div>
<div class="t" style="top:100.85px;font-size:5.85px;color:#333231;left:1009.5px;transform:translateX(-50%);">Create PDF</div>
<div class="t" style="top:108.75px;font-size:5.85px;color:#333231;left:1009.5px;transform:translateX(-50%);">and Share link</div>
<div class="t" style="top:100.85px;font-size:5.85px;color:#333231;left:1053.9px;transform:translateX(-50%);">Create PDF and</div>
<div class="t" style="top:108.75px;font-size:5.85px;color:#333231;left:1053.9px;transform:translateX(-50%);">Share via Outlook</div>
<div style="left:29.6px;top:350.5px;width:467.5px;height:289.5px;background:#fff;box-shadow:0 0 7px rgba(0,0,0,.85);"></div>
<div style="left:354.3px;top:382.9px;width:99.3px;height:25px;background:#c5d3ee;border:0.8px solid #8fa1c9;border-radius:0 6px 6px 0;"></div>
<div style="left:354.3px;top:426px;width:126.8px;height:183.2px;background:#fff;border:1px solid #1a1a1a;border-top:0.9px solid #4a4a4a;"></div>
<div style="left:451.1px;top:427px;width:29px;height:181.3px;background:#c5d3ee;border-left:0.9px solid #7b7f8c;"></div>
<div style="left:29.6px;top:350.5px;width:334.7px;height:289.5px;background:#fff;box-shadow:0 0 6px rgba(0,0,0,.8);clip-path:inset(0 -9px 0 0);"></div>
<div style="left:29.6px;top:456px;width:334.7px;height:184px;background:#c5d3ee;"></div>
<div style="left:29.6px;top:382.6px;width:219.8px;height:22.8px;background:#000;border-radius:0 7px 0 0;"></div>
<div style="left:29.6px;top:405px;width:219.8px;height:46.2px;background:#005eb0;border-radius:0 0 7px 0;"></div>
<div class="t" style="top:388.93px;font-size:11.3px;color:#fff;font-weight:700;letter-spacing:-0.25px;left:53.2px;">2025 national curriculum tests</div>
<div class="t" style="top:415.32px;font-size:26.2px;color:#fff;font-weight:700;letter-spacing:-0.9px;left:52.2px;-webkit-text-stroke:0.45px #fff;">Key stage 1</div>
<div class="t" style="top:480.32px;font-size:20.3px;color:#111;font-weight:700;letter-spacing:-0.7px;left:80.8px;">Mathematics</div>
<div class="t" style="top:510.71px;font-size:14.4px;color:#111;font-weight:700;letter-spacing:-0.46px;left:80.8px;">Paper 1:</div>
<div class="t" style="top:509.69px;font-size:15.6px;color:#1c1c1c;letter-spacing:0.08px;left:137.6px;">arithmetic</div>
<div style="left:80.9px;top:549.4px;width:238.7px;height:55.5px;background:#fff;border:0.9px solid #555;"></div>
<div style="left:81.4px;top:567.9px;width:237.7px;height:0.8px;background:#b4b4b4;"></div>
<div style="left:81.4px;top:586px;width:237.7px;height:0.8px;background:#b4b4b4;"></div>
<div style="left:137.5px;top:549.8px;width:0.8px;height:54.7px;background:#777;"></div>
<div class="t" style="top:556.3px;font-size:6.5px;color:#111;font-weight:700;letter-spacing:0px;left:86.2px;">First name</div>
<div class="t" style="top:575.1px;font-size:6.5px;color:#111;font-weight:700;letter-spacing:0px;left:86.2px;">Middle name</div>
<div class="t" style="top:593.2px;font-size:6.5px;color:#111;font-weight:700;letter-spacing:0px;left:86.2px;">Last name</div>
<div style="left:763px;top:350.5px;width:467.6px;height:289.5px;background:#fff;box-shadow:0 0 7px rgba(0,0,0,.85);"></div>
<div style="left:1187.1px;top:382.9px;width:43.5px;height:257.1px;background:#c5d3ee;"></div>
<div style="left:1093.7px;top:464.4px;width:7.4px;height:32.2px;background:#c5d3ee;border:0.9px solid #6f86bd;"></div>
<div style="left:763px;top:350.5px;width:334.7px;height:289.5px;background:#fff;box-shadow:0 0 6px rgba(0,0,0,.8);clip-path:inset(0 -9px 0 0);"></div>
<div style="left:763px;top:456px;width:334.7px;height:184px;background:#c5d3ee;"></div>
<div style="left:763px;top:382.6px;width:219.8px;height:22.8px;background:#000;border-radius:0 7px 0 0;"></div>
<div style="left:763px;top:405px;width:219.8px;height:46.2px;background:#005eb0;border-radius:0 0 7px 0;"></div>
<div class="t" style="top:388.93px;font-size:11.3px;color:#fff;font-weight:700;letter-spacing:-0.25px;left:786.6px;">2025 national curriculum tests</div>
<div class="t" style="top:415.32px;font-size:26.2px;color:#fff;font-weight:700;letter-spacing:-0.9px;left:785.6px;-webkit-text-stroke:0.45px #fff;">Key stage 1</div>
<div class="t" style="top:480.32px;font-size:20.3px;color:#111;font-weight:700;letter-spacing:-0.7px;left:814.2px;">Mathematics</div>
<div class="t" style="top:510.71px;font-size:14.4px;color:#111;font-weight:700;letter-spacing:0.05px;left:814.2px;">Paper 2:</div>
<div class="t" style="top:509.69px;font-size:15.6px;color:#1c1c1c;letter-spacing:-0.31px;left:875px;">reasoning</div>
<div style="left:814.3px;top:549.4px;width:238.7px;height:55.5px;background:#fff;border:0.9px solid #555;"></div>
<div style="left:814.8px;top:567.9px;width:237.7px;height:0.8px;background:#b4b4b4;"></div>
<div style="left:814.8px;top:586px;width:237.7px;height:0.8px;background:#b4b4b4;"></div>
<div style="left:870.9px;top:549.8px;width:0.8px;height:54.7px;background:#777;"></div>
<div class="t" style="top:556.3px;font-size:6.5px;color:#111;font-weight:700;letter-spacing:0px;left:819.6px;">First name</div>
<div class="t" style="top:575.1px;font-size:6.5px;color:#111;font-weight:700;letter-spacing:0px;left:819.6px;">Middle name</div>
<div class="t" style="top:593.2px;font-size:6.5px;color:#111;font-weight:700;letter-spacing:0px;left:819.6px;">Last name</div>
</div></div></body></html>
